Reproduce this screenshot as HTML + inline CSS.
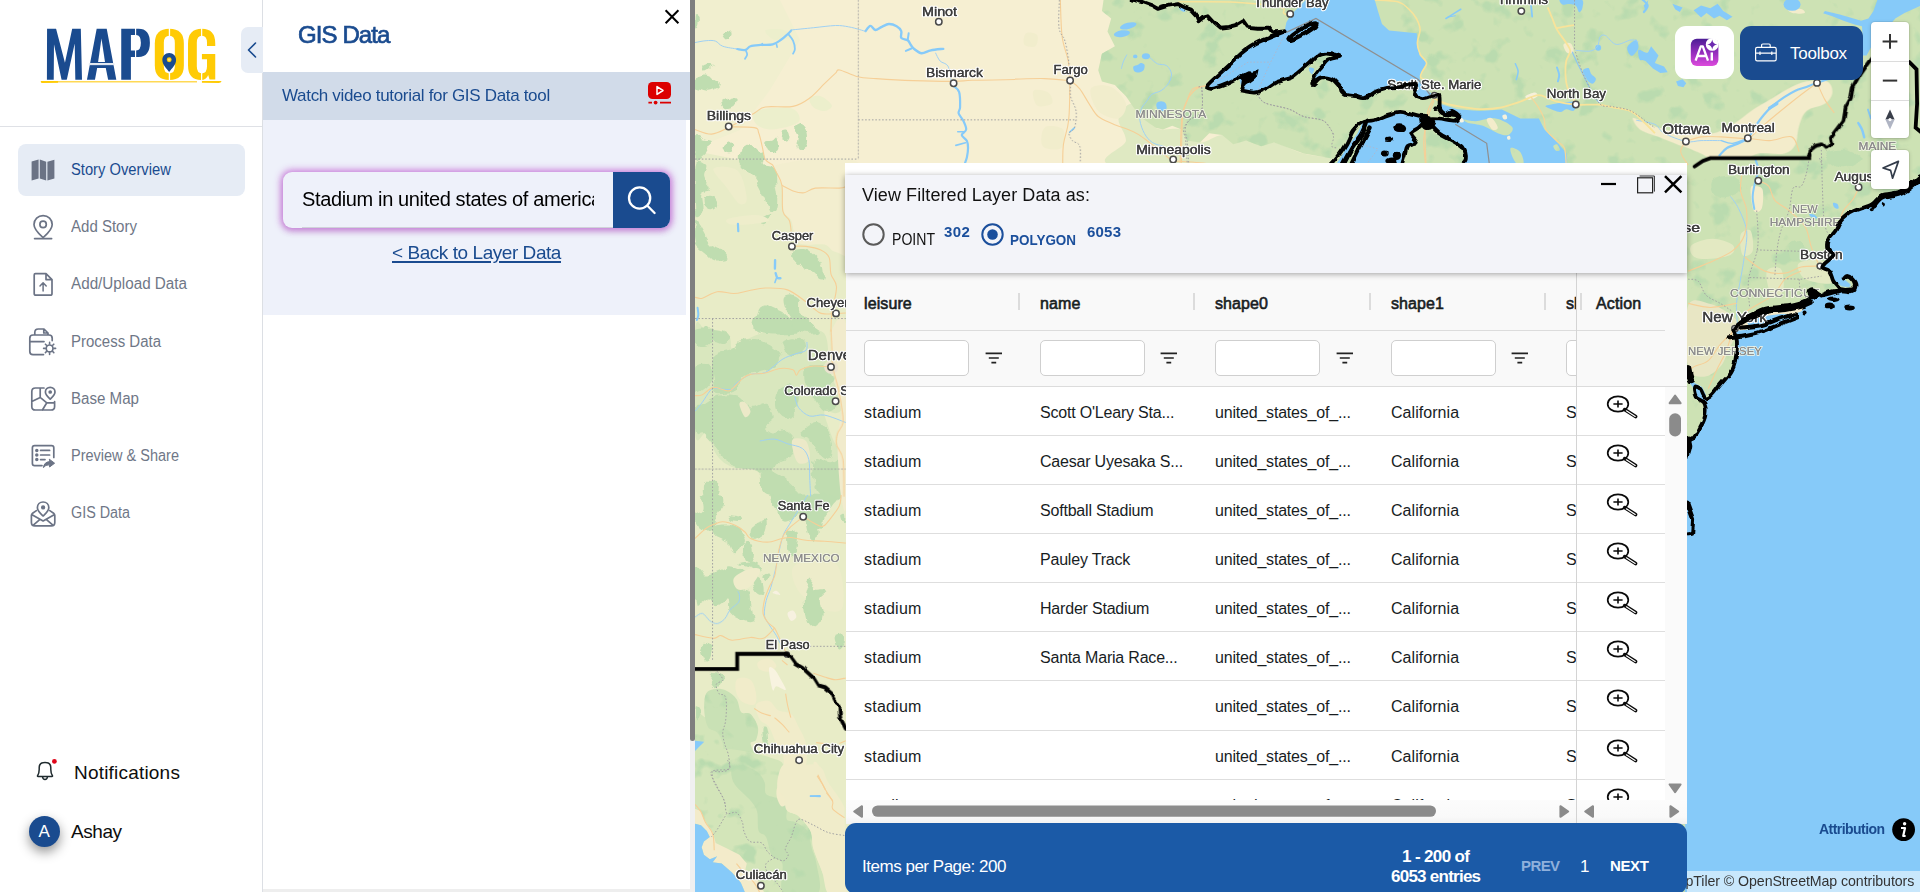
<!DOCTYPE html>
<html lang="en">
<head>
<meta charset="utf-8">
<title>MAPOG - GIS Data</title>
<style>
*{box-sizing:border-box;margin:0;padding:0}
html,body{width:1920px;height:892px;overflow:hidden;background:#fff;font-family:"Liberation Sans",sans-serif;color:#000}
.abs{position:absolute}
.t{position:absolute;white-space:nowrap;line-height:1}
/* sidebar */
#sidebar{position:absolute;left:0;top:0;width:263px;height:892px;background:#fff;border-right:1px solid #dcdfe4}
#sidebar .divider{position:absolute;left:0;top:126px;width:262px;height:1px;background:#dfe1e6}
.nav{position:absolute;left:18px;width:227px;height:52px;border-radius:8px}
.nav.active{background:#e6ecf5}
.nav .lbl{position:absolute;left:53px;top:17px;font-size:16px;line-height:18px;color:#6f7787;white-space:nowrap}
.nav.active .lbl{color:#1a4b8f}
.nav svg{position:absolute;left:10px;top:12px}
#collapse{position:absolute;left:241px;top:27px;width:22px;height:46px;background:#e6ecf5;border-radius:7px 0 0 7px}
/* gis panel */
#panel{position:absolute;left:263px;top:0;width:432px;height:892px;background:#fff}
#tut{position:absolute;left:0;top:72px;width:427px;height:48px;background:#d1dbe9}
#pbody{position:absolute;left:0;top:120px;width:423px;height:195px;background:#eef1fa}
#search{position:absolute;left:20px;top:172px;width:387px;height:56px;border-radius:9px;background:#eef1fa;box-shadow:0 0 7px 2px rgba(196,106,214,.85), 0 3px 6px rgba(120,60,140,.25)}
#search .btn{position:absolute;right:0;top:0;width:57px;height:56px;background:#1a4b8f;border-radius:0 9px 9px 0}
#search .ul{position:absolute;left:19px;top:54.5px;width:311px;height:1.5px;background:#cfd2d9}
#vsb{position:absolute;left:427px;top:0;width:5px;height:741px;background:#7f7f7f;border-radius:0 0 3px 3px}
#vtrack{position:absolute;left:427px;top:0;width:5px;height:892px;background:#f0f0f0}
/* map */
#map{position:absolute;left:695px;top:0;width:1225px;height:892px;overflow:hidden;background:#f6f0d2}
#map svg.base{position:absolute;left:-695px;top:0}
/* data panel */
#dp{position:absolute;left:845px;top:163px;width:842px;height:729px;background:transparent}
#dptop{position:absolute;left:0;top:0;width:842px;height:14px;background:#fff}
#dph{position:absolute;left:0;top:12px;width:842px;height:98px;background:#f3f4f9;box-shadow:0 1px 6px rgba(0,0,0,.36);z-index:3}
#dphi{position:absolute;left:0;top:-12px;width:842px;height:110px}
#grid{position:absolute;left:1px;top:110px;width:841px;height:551px;background:#fff;overflow:hidden}
#ghead{position:absolute;left:0;top:0;width:841px;height:113px;background:#f9f9f9}
.hl{position:absolute;left:0;height:1px;background:#dcdcdc}
.hc{position:absolute;top:22px;font-size:16px;font-weight:400;-webkit-text-stroke:.6px #181d1f;letter-spacing:.1px;color:#181d1f;white-space:nowrap;line-height:18px}
.sep{position:absolute;top:20px;width:2px;height:17px;background:#dcdcdc}
.fi{position:absolute;top:67px;width:105px;height:36px;border:1px solid #cfcfcf;border-radius:5px;background:#fff}
.fic{position:absolute;top:76.5px}
.row{position:absolute;left:0;width:730px;height:50px;border-bottom:1px solid #dedede;font-size:16px;color:#181d1f;letter-spacing:-.2px}
.row span{position:absolute;top:16px;line-height:20px;white-space:nowrap}
.c1{left:18px;letter-spacing:.22px}.c2{left:194px}.c3{left:369px}.c4{left:545px;letter-spacing:.05px}.c5{left:720px}
#pin{position:absolute;left:730px;top:0;width:111px;height:551px;border-left:1px solid #d4d4d4;background:transparent}
.mag{position:absolute;left:28.2px}
#foot{position:absolute;left:0;top:660px;width:842px;height:71px;background:#1b5aa7;border-radius:11px;color:#fff;z-index:4}
/* map controls */
.ctl{position:absolute;background:#fff;border-radius:4px;box-shadow:0 0 0 1px rgba(0,0,0,.06),0 1px 4px rgba(0,0,0,.18)}
.lab{font-family:"Liberation Sans",sans-serif;fill:#3d3d3d;stroke:#fff;stroke-width:2.6px;paint-order:stroke;stroke-linejoin:round;font-weight:400}
.lab2{font-family:"Liberation Sans",sans-serif;fill:#3e3e3e;stroke:#3e3e3e;stroke-width:.3px}
.st2{font-family:"Liberation Sans",sans-serif;fill:#8c8c8c;stroke:none}
.st{font-family:"Liberation Sans",sans-serif;fill:#8e8e8e;stroke:#f4f6e6;stroke-width:1.6px;paint-order:stroke}
</style>
</head>
<body>

<!-- ================= MAP ================= -->
<div id="map">
<svg class="base" width="1920" height="892" viewBox="0 0 1920 892">
<!--MAPSVG-->
<defs><filter id="forest" color-interpolation-filters="sRGB" filterUnits="userSpaceOnUse" x="690" y="0" width="1230" height="892"><feTurbulence type="fractalNoise" baseFrequency="0.045" numOctaves="3" seed="11" result="n"/><feColorMatrix in="n" type="matrix" values="0 0 0 0 0.73  0 0 0 0 0.86  0 0 0 0 0.685  7 0 0 0 -4.05" result="spots"/><feComposite in="spots" in2="SourceGraphic" operator="in" result="sp"/><feMerge><feMergeNode in="SourceGraphic"/><feMergeNode in="sp"/></feMerge></filter><filter id="jag" x="-5%" y="-5%" width="110%" height="110%"><feTurbulence type="fractalNoise" baseFrequency="0.09" numOctaves="2" seed="3" result="n"/><feDisplacementMap in="SourceGraphic" in2="n" scale="4.5" xChannelSelector="R" yChannelSelector="G"/></filter><filter id="rough" x="-5%" y="-5%" width="110%" height="110%"><feTurbulence type="fractalNoise" baseFrequency="0.07" numOctaves="3" seed="8" result="n"/><feDisplacementMap in="SourceGraphic" in2="n" scale="9" xChannelSelector="R" yChannelSelector="G"/></filter></defs>
<g id="L_tint" stroke="none">
<rect x="690" y="0" width="1230" height="892" fill="#f6efd2"/>
<path vector-effect="non-scaling-stroke" d="M690 150 L740 160 L790 175 L830 215 L850 260 L850 892 L690 892 Z" fill="#e8ecc7"/>
<path vector-effect="non-scaling-stroke" d="M690 0 L780 0 L800 40 L770 90 L740 130 L690 150 Z" fill="#f1efcf"/>
<g transform="translate(1015 0) scale(0.18498)"><path vector-effect="non-scaling-stroke" d="M640 560 C673.3 568.3 716.7 666.7 760 690 C803.3 713.3 860.0 686.7 900 700 C940.0 713.3 963.3 765.0 1000 770 C1036.7 775.0 1078.3 731.7 1120 730 C1161.7 728.3 1203.3 753.3 1250 760 C1296.7 766.7 1348.3 758.3 1400 770 C1451.7 781.7 1505.0 815.0 1560 830 C1615.0 845.0 1701.7 848.3 1730 860 C1758.3 871.7 1925.0 893.3 1730 900 C1535.0 906.7 748.3 923.3 560 900 C371.7 876.7 600.0 803.3 600 760 C600.0 716.7 553.3 673.3 560 640 C566.7 606.7 606.7 551.7 640 560 Z" fill="#dfe9c2"/></g>
<g transform="translate(695 0) scale(0.18498)"><path vector-effect="non-scaling-stroke" d="M380 165 C386.7 155.8 446.7 154.2 470 160 C493.3 165.8 526.7 190.8 520 200 C513.3 209.2 453.3 220.8 430 215 C406.7 209.2 373.3 174.2 380 165 Z" fill="#ecefcc"/></g>
<g transform="translate(695 0) scale(0.18498)"><path vector-effect="non-scaling-stroke" d="M330 600 C361.7 585.8 481.7 575.0 520 585 C558.3 595.0 576.7 640.8 560 660 C543.3 679.2 458.3 698.3 420 700 C381.7 701.7 345.0 686.7 330 670 C315.0 653.3 298.3 614.2 330 600 Z" fill="#ecefcc"/></g>
<g transform="translate(695 0) scale(0.18498)"><path vector-effect="non-scaling-stroke" d="M620 530 C626.7 520.0 660.0 513.3 680 520 C700.0 526.7 736.7 556.7 740 570 C743.3 583.3 716.7 598.3 700 600 C683.3 601.7 653.3 591.7 640 580 C626.7 568.3 613.3 540.0 620 530 Z" fill="#ecefcc"/></g>
<g transform="translate(1015 0) scale(0.18498)"><path vector-effect="non-scaling-stroke" d="M60 180 C71.7 171.7 111.7 178.3 120 190 C128.3 201.7 121.7 241.7 110 250 C98.3 258.3 58.3 251.7 50 240 C41.7 228.3 48.3 188.3 60 180 Z" fill="#f1edcc"/></g>
<g transform="translate(1015 0) scale(0.18498)"><path vector-effect="non-scaling-stroke" d="M100 490 C110.0 478.3 163.3 488.3 180 500 C196.7 511.7 210.0 548.3 200 560 C190.0 571.7 136.7 581.7 120 570 C103.3 558.3 90.0 501.7 100 490 Z" fill="#f1edcc"/></g>
<g transform="translate(1015 0) scale(0.18498)"><path vector-effect="non-scaling-stroke" d="M160 690 C178.3 675.0 245.0 681.7 260 700 C275.0 718.3 268.3 785.0 250 800 C231.7 815.0 165.0 808.3 150 790 C135.0 771.7 141.7 705.0 160 690 Z" fill="#f1edcc"/></g>
<g transform="translate(1015 0) scale(0.18498)"><path vector-effect="non-scaling-stroke" d="M410 480 C421.7 458.3 488.3 456.7 520 470 C551.7 483.3 593.3 531.7 600 560 C606.7 588.3 585.0 633.3 560 640 C535.0 646.7 475.0 626.7 450 600 C425.0 573.3 398.3 501.7 410 480 Z" fill="#f1edcc"/></g>
<g transform="translate(695 165) scale(0.18498)"><path vector-effect="non-scaling-stroke" d="M440 0 C511.7 -18.3 823.3 -78.3 900 0 C976.7 78.3 923.3 391.7 900 470 C876.7 548.3 793.3 476.7 760 470 C726.7 463.3 733.3 438.3 700 430 C666.7 421.7 590.0 441.7 560 420 C530.0 398.3 533.3 328.3 520 300 C506.7 271.7 488.3 281.7 480 250 C471.7 218.3 476.7 151.7 470 110 C463.3 68.3 368.3 18.3 440 0 Z" fill="#f3eecf"/></g>
<g transform="translate(695 330) scale(0.18498)"><path vector-effect="non-scaling-stroke" d="M0 0 C10.0 -93.3 30.0 -5.0 60 0 C90.0 5.0 156.7 13.3 180 30 C203.3 46.7 186.7 95.0 200 100 C213.3 105.0 223.3 76.7 260 60 C296.7 43.3 363.3 10.0 420 0 C476.7 -10.0 553.3 -3.3 600 0 C646.7 3.3 680.0 -5.0 700 20 C720.0 45.0 720.0 120.0 720 150 C720.0 180.0 693.3 175.0 700 200 C706.7 225.0 745.0 263.3 760 300 C775.0 336.7 790.0 395.0 790 420 C790.0 445.0 775.0 446.7 760 450 C745.0 453.3 706.7 428.3 700 440 C693.3 451.7 711.7 493.3 720 520 C728.3 546.7 736.7 570.0 750 600 C763.3 630.0 790.0 650.0 800 700 C810.0 750.0 850.0 866.7 810 900 C770.0 933.3 615.0 916.7 560 900 C505.0 883.3 510.0 813.3 480 800 C450.0 786.7 405.0 826.7 380 820 C355.0 813.3 360.0 773.3 330 760 C300.0 746.7 235.0 753.3 200 740 C165.0 726.7 143.3 710.0 120 680 C96.7 650.0 80.0 580.0 60 560 C40.0 540.0 10.0 653.3 0 560 C-10.0 466.7 -10.0 93.3 0 0 Z" fill="#d9e7be"/></g>
<g transform="translate(695 495) scale(0.18498)"><path vector-effect="non-scaling-stroke" d="M540 380 C573.3 355.0 716.7 333.3 760 370 C803.3 406.7 810.0 558.3 800 600 C790.0 641.7 740.0 633.3 700 620 C660.0 606.7 586.7 560.0 560 520 C533.3 480.0 506.7 405.0 540 380 Z" fill="#edecca"/></g>
<g transform="translate(695 760) scale(0.14802)"><path vector-effect="non-scaling-stroke" d="M700 100 C723.3 81.7 820.0 86.7 860 120 C900.0 153.3 933.3 256.7 940 300 C946.7 343.3 926.7 375.0 900 380 C873.3 385.0 810.0 355.0 780 330 C750.0 305.0 733.3 268.3 720 230 C706.7 191.7 676.7 118.3 700 100 Z" fill="#e7ecc6"/></g>
</g>
<g id="L_green" fill="#cde2b4" stroke="none" filter="url(#forest)">
<g transform="translate(1015 0) scale(0.18498)"><path vector-effect="non-scaling-stroke" d="M480 -10 L470 60 L520 100 L500 170 L540 250 L470 290 L450 380 L470 440 L540 460 L600 520 L640 580 L690 640 L760 690 L800 700 L850 680 L900 700 L930 760 L1000 770 L1050 720 L1120 730 L1180 780 L1250 760 L1330 790 L1400 770 L1480 800 L1560 830 L1730 860 L1730 900 L5000 900 L5000 -10 Z"/></g>
<g transform="translate(0 0) scale(1.00000)"><path vector-effect="non-scaling-stroke" d="M1680 150 L1930 150 L1930 900 L1680 900 Z"/></g>
<g transform="translate(1680 300) scale(0.20186)"><path vector-effect="non-scaling-stroke" d="M120 300 C133.3 276.7 180.0 260.0 200 260 C220.0 260.0 235.0 281.7 240 300 C245.0 318.3 240.0 350.0 230 370 C220.0 390.0 198.3 415.0 180 420 C161.7 425.0 130.0 420.0 120 400 C110.0 380.0 106.7 323.3 120 300 Z"/></g>
<g transform="translate(695 640) scale(0.18498)"><path vector-effect="non-scaling-stroke" d="M0 440 C10.0 360.0 35.0 410.0 60 420 C85.0 430.0 131.7 463.3 150 500 C168.3 536.7 161.7 596.7 170 640 C178.3 683.3 178.3 716.7 200 760 C221.7 803.3 333.3 876.7 300 900 C266.7 923.3 50.0 976.7 0 900 C-50.0 823.3 -10.0 520.0 0 440 Z" fill="#d3e5b9"/></g>
<g transform="translate(695 640) scale(0.18498)"><path vector-effect="non-scaling-stroke" d="M60 290 C70.0 270.8 91.7 267.5 110 265 C128.3 262.5 150.8 265.8 170 275 C189.2 284.2 211.7 300.8 225 320 C238.3 339.2 237.5 376.7 250 390 C262.5 403.3 285.0 386.7 300 400 C315.0 413.3 335.0 446.7 340 470 C345.0 493.3 336.7 525.0 330 540 C323.3 555.0 298.3 543.3 300 560 C301.7 576.7 323.3 616.7 340 640 C356.7 663.3 380.0 673.3 400 700 C420.0 726.7 448.3 766.7 460 800 C471.7 833.3 496.7 883.3 470 900 C443.3 916.7 345.0 925.0 300 900 C255.0 875.0 223.3 793.3 200 750 C176.7 706.7 168.3 671.7 160 640 C151.7 608.3 156.7 583.3 150 560 C143.3 536.7 133.3 515.0 120 500 C106.7 485.0 81.7 490.0 70 470 C58.3 450.0 51.7 410.0 50 380 C48.3 350.0 50.0 309.2 60 290 Z" fill="#c9e1b5"/></g>
<g transform="translate(695 760) scale(0.14802)"><path vector-effect="non-scaling-stroke" d="M0 0 C93.3 -150.0 466.7 -33.3 560 0 C653.3 33.3 553.3 158.3 560 200 C566.7 241.7 590.0 226.7 600 250 C610.0 273.3 603.3 318.3 620 340 C636.7 361.7 673.3 356.7 700 380 C726.7 403.3 763.3 443.3 780 480 C796.7 516.7 786.7 553.3 800 600 C813.3 646.7 843.3 710.0 860 760 C876.7 810.0 1043.3 876.7 900 900 C756.7 923.3 150.0 1050.0 0 900 C-150.0 750.0 -93.3 150.0 0 0 Z" fill="#d3e5b9"/></g>
<g transform="translate(695 760) scale(0.14802)"><path vector-effect="non-scaling-stroke" d="M250 60 C261.7 41.7 301.7 36.7 330 40 C358.3 43.3 396.7 61.7 420 80 C443.3 98.3 460.0 125.0 470 150 C480.0 175.0 465.0 211.7 480 230 C495.0 248.3 536.7 248.3 560 260 C583.3 271.7 610.0 276.7 620 300 C630.0 323.3 610.0 380.0 620 400 C630.0 420.0 656.7 406.7 680 420 C703.3 433.3 741.7 450.0 760 480 C778.3 510.0 780.0 563.3 790 600 C800.0 636.7 813.3 650.0 820 700 C826.7 750.0 866.7 866.7 830 900 C793.3 933.3 640.0 933.3 600 900 C560.0 866.7 603.3 741.7 590 700 C576.7 658.3 538.3 680.0 520 650 C501.7 620.0 495.0 548.3 480 520 C465.0 491.7 440.0 508.3 430 480 C420.0 451.7 428.3 383.3 420 350 C411.7 316.7 396.7 301.7 380 280 C363.3 258.3 340.0 241.7 320 220 C300.0 198.3 271.7 176.7 260 150 C248.3 123.3 238.3 78.3 250 60 Z" fill="#c3deb2"/></g>
</g>
<g id="L_dgreen" fill="#bfddb0" stroke="none" filter="url(#rough)">
<g transform="translate(695 0) scale(0.18498)"><path vector-effect="non-scaling-stroke" d="M0 85 C3.3 75.8 17.5 85.8 20 95 C22.5 104.2 18.3 130.8 15 140 C11.7 149.2 2.5 159.2 0 150 C-2.5 140.8 -3.3 94.2 0 85 Z"/></g>
<g transform="translate(695 0) scale(0.18498)"><path vector-effect="non-scaling-stroke" d="M150 175 C150.5 167.3 167.0 161.2 175 162 C183.0 162.8 198.5 172.3 198 180 C197.5 187.7 180.0 208.8 172 208 C164.0 207.2 149.5 182.7 150 175 Z"/></g>
<g transform="translate(695 0) scale(0.18498)"><path vector-effect="non-scaling-stroke" d="M40 360 C44.2 353.3 60.0 346.7 70 345 C80.0 343.3 97.5 345.0 100 350 C102.5 355.0 91.7 368.0 85 375 C78.3 382.0 66.7 390.3 60 392 C53.3 393.7 48.3 390.3 45 385 C41.7 379.7 35.8 366.7 40 360 Z"/></g>
<g transform="translate(695 0) scale(0.18498)"><path vector-effect="non-scaling-stroke" d="M0 440 C5.0 431.7 16.7 424.2 30 420 C43.3 415.8 64.2 411.7 80 415 C95.8 418.3 118.3 430.8 125 440 C131.7 449.2 129.2 461.7 120 470 C110.8 478.3 86.7 488.3 70 490 C53.3 491.7 31.7 483.3 20 480 C8.3 476.7 3.3 476.7 0 470 C-3.3 463.3 -5.0 448.3 0 440 Z"/></g>
<g transform="translate(695 0) scale(0.18498)"><path vector-effect="non-scaling-stroke" d="M150 560 C151.7 551.7 168.0 540.3 180 535 C192.0 529.7 216.2 522.2 222 528 C227.8 533.8 223.7 560.5 215 570 C206.3 579.5 180.8 586.7 170 585 C159.2 583.3 148.3 568.3 150 560 Z"/></g>
<g transform="translate(695 0) scale(0.18498)"><path vector-effect="non-scaling-stroke" d="M0 740 C6.7 723.3 25.8 755.0 40 760 C54.2 765.0 80.0 760.0 85 770 C90.0 780.0 79.2 805.0 70 820 C60.8 835.0 41.7 853.3 30 860 C18.3 866.7 5.0 880.0 0 860 C-5.0 840.0 -6.7 756.7 0 740 Z"/></g>
<g transform="translate(695 0) scale(0.18498)"><path vector-effect="non-scaling-stroke" d="M150 790 C152.5 779.5 175.0 765.0 185 765 C195.0 765.0 206.7 779.2 210 790 C213.3 800.8 211.7 823.7 205 830 C198.3 836.3 179.2 834.7 170 828 C160.8 821.3 147.5 800.5 150 790 Z"/></g>
<g transform="translate(695 0) scale(0.18498)"><path vector-effect="non-scaling-stroke" d="M240 830 C243.3 813.0 258.3 795.0 270 790 C281.7 785.0 295.0 793.3 310 800 C325.0 806.7 353.3 814.7 360 830 C366.7 845.3 368.3 881.7 350 892 C331.7 902.3 268.3 902.3 250 892 C231.7 881.7 236.7 847.0 240 830 Z"/></g>
<g transform="translate(695 0) scale(0.18498)"><path vector-effect="non-scaling-stroke" d="M380 770 C385.0 760.8 410.0 764.2 420 760 C430.0 755.8 435.0 738.3 440 745 C445.0 751.7 453.3 787.5 450 800 C446.7 812.5 430.0 817.5 420 820 C410.0 822.5 396.7 823.3 390 815 C383.3 806.7 375.0 779.2 380 770 Z"/></g>
<g transform="translate(695 0) scale(0.18498)"><path vector-effect="non-scaling-stroke" d="M460 715 C463.3 706.3 481.3 698.3 490 700 C498.7 701.7 510.3 715.3 512 725 C513.7 734.7 507.0 753.5 500 758 C493.0 762.5 476.7 759.2 470 752 C463.3 744.8 456.7 723.7 460 715 Z"/></g>
<g transform="translate(695 0) scale(0.18498)"><path vector-effect="non-scaling-stroke" d="M535 690 C536.7 677.5 559.2 663.3 570 665 C580.8 666.7 594.2 682.5 600 700 C605.8 717.5 608.3 752.5 605 770 C601.7 787.5 588.3 800.8 580 805 C571.7 809.2 558.3 805.8 555 795 C551.7 784.2 563.3 757.5 560 740 C556.7 722.5 533.3 702.5 535 690 Z"/></g>
<g transform="translate(1680 150) scale(0.20186)"><path vector-effect="non-scaling-stroke" d="M160 150 C176.7 136.7 236.7 121.7 260 130 C283.3 138.3 306.7 181.7 300 200 C293.3 218.3 243.3 238.3 220 240 C196.7 241.7 170.0 225.0 160 210 C150.0 195.0 143.3 163.3 160 150 Z"/></g>
<g transform="translate(1680 150) scale(0.20186)"><path vector-effect="non-scaling-stroke" d="M540 470 C546.7 455.0 585.0 441.7 600 450 C615.0 458.3 636.7 505.0 630 520 C623.3 535.0 575.0 548.3 560 540 C545.0 531.7 533.3 485.0 540 470 Z"/></g>
<g transform="translate(1680 150) scale(0.20186)"><path vector-effect="non-scaling-stroke" d="M720 20 C723.3 5.0 790.0 -5.0 820 0 C850.0 5.0 903.3 35.0 900 50 C896.7 65.0 830.0 95.0 800 90 C770.0 85.0 716.7 35.0 720 20 Z"/></g>
<g transform="translate(695 165) scale(0.18498)"><path vector-effect="non-scaling-stroke" d="M0 0 C10.0 -45.0 51.7 -10.0 60 0 C68.3 10.0 45.8 40.0 50 60 C54.2 80.0 86.7 105.0 85 120 C83.3 135.0 46.7 128.3 40 150 C33.3 171.7 51.7 230.0 45 250 C38.3 270.0 7.5 311.7 0 270 C-7.5 228.3 -10.0 45.0 0 0 Z"/></g>
<g transform="translate(695 165) scale(0.18498)"><path vector-effect="non-scaling-stroke" d="M55 175 C61.7 165.8 88.3 163.3 100 170 C111.7 176.7 125.8 202.5 125 215 C124.2 227.5 105.8 243.3 95 245 C84.2 246.7 66.7 236.7 60 225 C53.3 213.3 48.3 184.2 55 175 Z"/></g>
<g transform="translate(695 165) scale(0.18498)"><path vector-effect="non-scaling-stroke" d="M250 0 C270.0 -8.3 388.3 -16.7 420 0 C451.7 16.7 435.0 70.0 440 100 C445.0 130.0 450.0 156.7 450 180 C450.0 203.3 448.3 229.2 440 240 C431.7 250.8 410.0 253.3 400 245 C390.0 236.7 390.0 212.5 380 190 C370.0 167.5 353.3 133.3 340 110 C326.7 86.7 315.0 68.3 300 50 C285.0 31.7 230.0 8.3 250 0 Z"/></g>
<g transform="translate(695 165) scale(0.18498)"><path vector-effect="non-scaling-stroke" d="M335 300 C336.7 290.0 377.2 269.7 390 265 C402.8 260.3 413.7 262.0 412 272 C410.3 282.0 392.8 320.3 380 325 C367.2 329.7 333.3 310.0 335 300 Z"/></g>
<g transform="translate(695 165) scale(0.18498)"><path vector-effect="non-scaling-stroke" d="M0 310 C3.3 293.3 6.7 301.7 20 320 C33.3 338.3 61.7 398.3 80 420 C98.3 441.7 114.2 435.0 130 450 C145.8 465.0 180.0 499.2 175 510 C170.0 520.8 119.2 520.0 100 515 C80.8 510.0 76.7 495.8 60 480 C43.3 464.2 10.0 448.3 0 420 C-10.0 391.7 -3.3 326.7 0 310 Z"/></g>
<g transform="translate(695 165) scale(0.18498)"><path vector-effect="non-scaling-stroke" d="M520 470 C529.2 460.0 576.7 450.0 600 455 C623.3 460.0 645.0 485.8 660 500 C675.0 514.2 684.2 521.7 690 540 C695.8 558.3 698.3 597.5 695 610 C691.7 622.5 679.2 620.0 670 615 C660.8 610.0 651.7 589.2 640 580 C628.3 570.8 615.8 570.8 600 560 C584.2 549.2 558.3 530.0 545 515 C531.7 500.0 510.8 480.0 520 470 Z"/></g>
<g transform="translate(695 165) scale(0.18498)"><path vector-effect="non-scaling-stroke" d="M340 800 C346.7 776.7 365.0 763.3 380 760 C395.0 756.7 406.7 768.3 430 780 C453.3 791.7 495.0 810.0 520 830 C545.0 850.0 610.0 888.3 580 900 C550.0 911.7 380.0 916.7 340 900 C300.0 883.3 333.3 823.3 340 800 Z"/></g>
<g transform="translate(695 165) scale(0.18498)"><path vector-effect="non-scaling-stroke" d="M480 720 C485.0 707.5 505.8 703.3 520 705 C534.2 706.7 556.7 714.2 565 730 C573.3 745.8 562.5 780.0 570 800 C577.5 820.0 593.3 833.3 610 850 C626.7 866.7 678.3 891.7 670 900 C661.7 908.3 585.0 911.7 560 900 C535.0 888.3 531.7 850.0 520 830 C508.3 810.0 496.7 798.3 490 780 C483.3 761.7 475.0 732.5 480 720 Z"/></g>
<g transform="translate(695 330) scale(0.18498)"><path vector-effect="non-scaling-stroke" d="M0 0 C23.3 -13.3 108.3 -6.7 140 0 C171.7 6.7 188.3 28.3 190 40 C191.7 51.7 165.0 66.7 150 70 C135.0 73.3 115.0 56.7 100 60 C85.0 63.3 76.7 86.7 60 90 C43.3 93.3 10.0 95.0 0 80 C-10.0 65.0 -23.3 13.3 0 0 Z" fill="#c0ddb0"/></g>
<g transform="translate(695 330) scale(0.18498)"><path vector-effect="non-scaling-stroke" d="M0 200 C10.0 175.0 44.2 175.0 60 180 C75.8 185.0 91.7 210.0 95 230 C98.3 250.0 90.8 281.7 80 300 C69.2 318.3 43.3 335.0 30 340 C16.7 345.0 5.0 353.3 0 330 C-5.0 306.7 -10.0 225.0 0 200 Z" fill="#c0ddb0"/></g>
<g transform="translate(695 330) scale(0.18498)"><path vector-effect="non-scaling-stroke" d="M100 150 C116.7 118.3 176.7 125.0 200 110 C223.3 95.0 218.3 70.0 240 60 C261.7 50.0 300.0 45.0 330 50 C360.0 55.0 396.7 73.3 420 90 C443.3 106.7 468.3 131.7 470 150 C471.7 168.3 451.7 186.7 430 200 C408.3 213.3 365.0 223.3 340 230 C315.0 236.7 298.3 230.0 280 240 C261.7 250.0 243.3 275.0 230 290 C216.7 305.0 216.7 321.7 200 330 C183.3 338.3 146.7 345.0 130 340 C113.3 335.0 105.0 331.7 100 300 C95.0 268.3 83.3 181.7 100 150 Z" fill="#c0ddb0"/></g>
<g transform="translate(695 330) scale(0.18498)"><path vector-effect="non-scaling-stroke" d="M480 60 C491.7 48.3 520.0 38.3 540 40 C560.0 41.7 591.7 56.7 600 70 C608.3 83.3 603.3 108.3 590 120 C576.7 131.7 540.0 141.7 520 140 C500.0 138.3 476.7 123.3 470 110 C463.3 96.7 468.3 71.7 480 60 Z" fill="#c0ddb0"/></g>
<g transform="translate(695 330) scale(0.18498)"><path vector-effect="non-scaling-stroke" d="M600 210 C616.7 193.3 675.0 191.7 700 200 C725.0 208.3 745.0 238.3 750 260 C755.0 281.7 728.3 303.3 730 330 C731.7 356.7 765.0 401.7 760 420 C755.0 438.3 718.3 446.7 700 440 C681.7 433.3 666.7 403.3 650 380 C633.3 356.7 608.3 328.3 600 300 C591.7 271.7 583.3 226.7 600 210 Z" fill="#c0ddb0"/></g>
<g transform="translate(695 330) scale(0.18498)"><path vector-effect="non-scaling-stroke" d="M450 330 C463.3 310.0 501.7 295.0 520 300 C538.3 305.0 556.7 336.7 560 360 C563.3 383.3 553.3 421.7 540 440 C526.7 458.3 496.7 473.3 480 470 C463.3 466.7 445.0 443.3 440 420 C435.0 396.7 436.7 350.0 450 330 Z" fill="#c0ddb0"/></g>
<g transform="translate(695 330) scale(0.18498)"><path vector-effect="non-scaling-stroke" d="M40 400 C61.7 388.3 98.3 356.7 130 350 C161.7 343.3 201.7 348.3 230 360 C258.3 371.7 275.0 413.3 300 420 C325.0 426.7 360.0 391.7 380 400 C400.0 408.3 420.0 450.0 420 470 C420.0 490.0 378.3 505.0 380 520 C381.7 535.0 410.0 556.7 430 560 C450.0 563.3 481.7 533.3 500 540 C518.3 546.7 536.7 576.7 540 600 C543.3 623.3 536.7 660.0 520 680 C503.3 700.0 460.0 700.0 440 720 C420.0 740.0 418.3 793.3 400 800 C381.7 806.7 355.0 770.0 330 760 C305.0 750.0 278.3 750.0 250 740 C221.7 730.0 185.0 720.0 160 700 C135.0 680.0 120.0 643.3 100 620 C80.0 596.7 56.7 570.0 40 560 C23.3 550.0 6.7 583.3 0 560 C-6.7 536.7 -6.7 446.7 0 420 C6.7 393.3 18.3 411.7 40 400 Z" fill="#c0ddb0"/></g>
<g transform="translate(695 330) scale(0.18498)"><path vector-effect="non-scaling-stroke" d="M560 560 C563.3 543.3 616.7 506.7 640 500 C663.3 493.3 683.3 500.0 700 520 C716.7 540.0 736.7 590.0 740 620 C743.3 650.0 733.3 693.3 720 700 C706.7 706.7 676.7 676.7 660 660 C643.3 643.3 636.7 616.7 620 600 C603.3 583.3 556.7 576.7 560 560 Z" fill="#c0ddb0"/></g>
<g transform="translate(695 330) scale(0.18498)"><path vector-effect="non-scaling-stroke" d="M640 700 C653.3 686.7 693.3 720.0 720 720 C746.7 720.0 785.0 671.3 800 700 C815.0 728.7 830.0 860.0 810 892 C790.0 924.0 708.3 907.3 680 892 C651.7 876.7 646.7 832.0 640 800 C633.3 768.0 626.7 713.3 640 700 Z" fill="#c0ddb0"/></g>
<g transform="translate(695 330) scale(0.18498)"><path vector-effect="non-scaling-stroke" d="M360 760 C376.7 744.7 446.7 778.0 480 800 C513.3 822.0 576.7 876.7 560 892 C543.3 907.3 413.3 914.0 380 892 C346.7 870.0 343.3 775.3 360 760 Z" fill="#c0ddb0"/></g>
<g transform="translate(695 330) scale(0.18498)"><path vector-effect="non-scaling-stroke" d="M60 820 C70.0 809.7 111.7 818.0 120 830 C128.3 842.0 120.0 881.7 110 892 C100.0 902.3 68.3 904.0 60 892 C51.7 880.0 50.0 830.3 60 820 Z" fill="#c0ddb0"/></g>
<g transform="translate(695 495) scale(0.18498)"><path vector-effect="non-scaling-stroke" d="M40 0 C56.7 -13.3 121.7 -10.0 140 0 C158.3 10.0 153.3 41.7 150 60 C146.7 78.3 128.3 90.0 120 110 C111.7 130.0 113.3 166.7 100 180 C86.7 193.3 56.7 195.0 40 190 C23.3 185.0 6.7 163.3 0 150 C-6.7 136.7 -6.7 121.7 0 110 C6.7 98.3 33.3 98.3 40 80 C46.7 61.7 23.3 13.3 40 0 Z"/></g>
<g transform="translate(695 495) scale(0.18498)"><path vector-effect="non-scaling-stroke" d="M185 110 C193.3 107.5 238.3 115.0 250 120 C261.7 125.0 263.3 137.5 255 140 C246.7 142.5 211.7 140.0 200 135 C188.3 130.0 176.7 112.5 185 110 Z"/></g>
<g transform="translate(695 495) scale(0.18498)"><path vector-effect="non-scaling-stroke" d="M100 170 C112.5 160.8 155.0 156.7 180 160 C205.0 163.3 234.2 175.0 250 190 C265.8 205.0 276.7 233.3 275 250 C273.3 266.7 250.0 278.3 240 290 C230.0 301.7 223.3 323.3 215 320 C206.7 316.7 200.8 283.3 190 270 C179.2 256.7 164.2 249.2 150 240 C135.8 230.8 113.3 226.7 105 215 C96.7 203.3 87.5 179.2 100 170 Z"/></g>
<g transform="translate(695 495) scale(0.18498)"><path vector-effect="non-scaling-stroke" d="M300 170 C308.3 156.7 335.8 150.8 350 145 C364.2 139.2 380.0 125.8 385 135 C390.0 144.2 389.2 183.3 380 200 C370.8 216.7 343.3 230.8 330 235 C316.7 239.2 305.0 235.8 300 225 C295.0 214.2 291.7 183.3 300 170 Z"/></g>
<g transform="translate(695 495) scale(0.18498)"><path vector-effect="non-scaling-stroke" d="M265 290 C270.0 273.3 291.2 248.3 300 250 C308.8 251.7 316.3 283.3 318 300 C319.7 316.7 318.0 341.7 310 350 C302.0 358.3 277.5 360.0 270 350 C262.5 340.0 260.0 306.7 265 290 Z"/></g>
<g transform="translate(695 495) scale(0.18498)"><path vector-effect="non-scaling-stroke" d="M430 0 C481.7 -13.3 698.3 -10.0 750 0 C801.7 10.0 748.3 40.0 740 60 C731.7 80.0 708.3 102.5 700 120 C691.7 137.5 698.3 156.7 690 165 C681.7 173.3 665.0 175.8 650 170 C635.0 164.2 615.0 141.7 600 130 C585.0 118.3 573.3 100.0 560 100 C546.7 100.0 535.0 124.2 520 130 C505.0 135.8 483.3 143.3 470 135 C456.7 126.7 446.7 102.5 440 80 C433.3 57.5 378.3 13.3 430 0 Z"/></g>
<g transform="translate(695 495) scale(0.18498)"><path vector-effect="non-scaling-stroke" d="M500 190 C507.5 173.3 540.8 190.0 550 200 C559.2 210.0 558.3 228.3 555 250 C551.7 271.7 538.3 321.7 530 330 C521.7 338.3 510.0 323.3 505 300 C500.0 276.7 492.5 206.7 500 190 Z"/></g>
<g transform="translate(695 495) scale(0.18498)"><path vector-effect="non-scaling-stroke" d="M605 140 C611.7 130.0 652.5 151.7 660 170 C667.5 188.3 656.7 240.0 650 250 C643.3 260.0 627.5 248.3 620 230 C612.5 211.7 598.3 150.0 605 140 Z"/></g>
<g transform="translate(695 495) scale(0.18498)"><path vector-effect="non-scaling-stroke" d="M0 390 C10.0 363.3 35.0 428.3 60 430 C85.0 431.7 128.3 408.3 150 400 C171.7 391.7 176.7 381.7 190 380 C203.3 378.3 213.3 383.3 230 390 C246.7 396.7 288.3 411.7 290 420 C291.7 428.3 246.7 426.7 240 440 C233.3 453.3 240.0 486.7 250 500 C260.0 513.3 290.0 503.3 300 520 C310.0 536.7 306.7 573.3 310 600 C313.3 626.7 328.3 666.7 320 680 C311.7 693.3 281.7 686.7 260 680 C238.3 673.3 203.3 660.0 190 640 C176.7 620.0 191.7 566.7 180 560 C168.3 553.3 136.7 600.0 120 600 C103.3 600.0 96.7 560.0 80 560 C63.3 560.0 33.3 595.0 20 600 C6.7 605.0 3.3 625.0 0 590 C-3.3 555.0 -10.0 416.7 0 390 Z"/></g>
<g transform="translate(695 495) scale(0.18498)"><path vector-effect="non-scaling-stroke" d="M235 370 C235.0 364.2 280.0 356.7 300 360 C320.0 363.3 346.7 380.0 355 390 C363.3 400.0 359.2 419.2 350 420 C340.8 420.8 319.2 403.3 300 395 C280.8 386.7 235.0 375.8 235 370 Z"/></g>
<g transform="translate(695 495) scale(0.18498)"><path vector-effect="non-scaling-stroke" d="M310 460 C313.3 447.5 340.0 440.0 350 445 C360.0 450.0 367.5 474.2 370 490 C372.5 505.8 371.7 535.0 365 540 C358.3 545.0 339.2 533.3 330 520 C320.8 506.7 306.7 472.5 310 460 Z"/></g>
<g transform="translate(695 495) scale(0.18498)"><path vector-effect="non-scaling-stroke" d="M375 440 C375.0 431.7 388.3 415.0 395 415 C401.7 415.0 415.0 431.7 415 440 C415.0 448.3 401.7 465.0 395 465 C388.3 465.0 375.0 448.3 375 440 Z"/></g>
<g transform="translate(695 495) scale(0.18498)"><path vector-effect="non-scaling-stroke" d="M590 540 C594.2 509.2 611.7 466.7 620 455 C628.3 443.3 637.5 460.8 640 470 C642.5 479.2 625.0 503.3 635 510 C645.0 516.7 688.3 506.7 700 510 C711.7 513.3 708.3 521.7 705 530 C701.7 538.3 682.5 541.7 680 560 C677.5 578.3 692.5 615.0 690 640 C687.5 665.0 676.7 700.0 665 710 C653.3 720.0 631.7 711.7 620 700 C608.3 688.3 600.0 666.7 595 640 C590.0 613.3 585.8 570.8 590 540 Z"/></g>
<g transform="translate(695 495) scale(0.18498)"><path vector-effect="non-scaling-stroke" d="M750 780 C754.2 767.5 790.0 758.3 800 760 C810.0 761.7 814.2 777.5 810 790 C805.8 802.5 785.0 836.7 775 835 C765.0 833.3 745.8 792.5 750 780 Z"/></g>
<g transform="translate(695 495) scale(0.18498)"><path vector-effect="non-scaling-stroke" d="M30 830 C33.3 818.3 45.8 800.0 55 800 C64.2 800.0 84.2 814.7 85 830 C85.8 845.3 68.3 885.3 60 892 C51.7 898.7 40.0 880.3 35 870 C30.0 859.7 26.7 841.7 30 830 Z"/></g>
<g transform="translate(695 495) scale(0.18498)"><path vector-effect="non-scaling-stroke" d="M780 110 C783.3 102.5 805.0 96.7 810 105 C815.0 113.3 813.3 152.5 810 160 C806.7 167.5 795.0 158.3 790 150 C785.0 141.7 776.7 117.5 780 110 Z"/></g>
<g transform="translate(695 640) scale(0.18498)"><path vector-effect="non-scaling-stroke" d="M30 40 C33.3 27.5 45.8 13.3 55 15 C64.2 16.7 84.2 33.3 85 50 C85.8 66.7 68.3 108.3 60 115 C51.7 121.7 40.0 102.5 35 90 C30.0 77.5 26.7 52.5 30 40 Z"/></g>
<g transform="translate(695 640) scale(0.18498)"><path vector-effect="non-scaling-stroke" d="M85 200 C88.3 189.2 100.0 175.0 110 175 C120.0 175.0 143.3 185.8 145 200 C146.7 214.2 129.2 253.3 120 260 C110.8 266.7 95.8 250.0 90 240 C84.2 230.0 81.7 210.8 85 200 Z"/></g>
<g transform="translate(695 640) scale(0.18498)"><path vector-effect="non-scaling-stroke" d="M0 350 C5.0 340.0 26.7 366.7 30 380 C33.3 393.3 25.0 420.0 20 430 C15.0 440.0 3.3 453.3 0 440 C-3.3 426.7 -5.0 360.0 0 350 Z"/></g>
<g transform="translate(695 640) scale(0.18498)"><path vector-effect="non-scaling-stroke" d="M420 450 C429.2 448.3 455.0 468.3 470 480 C485.0 491.7 505.0 506.7 510 520 C515.0 533.3 510.0 556.7 500 560 C490.0 563.3 464.2 551.7 450 540 C435.8 528.3 420.0 505.0 415 490 C410.0 475.0 410.8 451.7 420 450 Z"/></g>
<g transform="translate(695 640) scale(0.18498)"><path vector-effect="non-scaling-stroke" d="M370 470 C371.7 454.2 385.0 453.3 390 465 C395.0 476.7 401.7 524.2 400 540 C398.3 555.8 385.0 571.7 380 560 C375.0 548.3 368.3 485.8 370 470 Z"/></g>
</g>
<g id="L_sand" fill="#f3eccb" stroke="none">
<g transform="translate(1335 0) scale(0.18498)"><path vector-effect="non-scaling-stroke" d="M1235 240 C1238.3 231.7 1265.8 228.3 1275 235 C1284.2 241.7 1293.3 271.7 1290 280 C1286.7 288.3 1264.2 291.7 1255 285 C1245.8 278.3 1231.7 248.3 1235 240 Z"/></g>
<g transform="translate(1335 0) scale(0.18498)"><path vector-effect="non-scaling-stroke" d="M1030 520 C1035.0 513.3 1069.2 500.0 1080 500 C1090.8 500.0 1100.0 513.3 1095 520 C1090.0 526.7 1060.8 540.0 1050 540 C1039.2 540.0 1025.0 526.7 1030 520 Z" fill="#f6f0da"/></g>
<g transform="translate(1640 0) scale(0.18498)"><path vector-effect="non-scaling-stroke" d="M1010 440 C1033.3 450.0 1041.7 480.0 1040 500 C1038.3 520.0 1023.3 543.3 1000 560 C976.7 576.7 923.3 580.0 900 600 C876.7 620.0 870.0 650.0 860 680 C850.0 710.0 853.3 755.0 840 780 C826.7 805.0 813.3 821.7 780 830 C746.7 838.3 676.7 825.0 640 830 C603.3 835.0 600.0 855.0 560 860 C520.0 865.0 438.3 865.0 400 860 C361.7 855.0 353.3 840.0 330 830 C306.7 820.0 281.7 808.3 260 800 C238.3 791.7 226.7 790.0 200 780 C173.3 770.0 133.3 753.3 100 740 C66.7 726.7 23.3 716.7 0 700 C-23.3 683.3 -40.0 648.3 -40 640 C-40.0 631.7 -23.3 641.7 0 650 C23.3 658.3 58.3 678.3 100 690 C141.7 701.7 200.0 715.0 250 720 C300.0 725.0 355.0 730.0 400 720 C445.0 710.0 486.7 680.0 520 660 C553.3 640.0 570.0 620.0 600 600 C630.0 580.0 666.7 560.0 700 540 C733.3 520.0 766.7 496.7 800 480 C833.3 463.3 865.0 446.7 900 440 C935.0 433.3 986.7 430.0 1010 440 Z"/></g>
<g transform="translate(1640 0) scale(0.18498)"><path vector-effect="non-scaling-stroke" d="M800 52 C806.7 48.0 855.0 45.0 870 48 C885.0 51.0 896.7 66.0 890 70 C883.3 74.0 845.0 75.0 830 72 C815.0 69.0 793.3 56.0 800 52 Z"/></g>
<g transform="translate(1680 150) scale(0.20186)"><path vector-effect="non-scaling-stroke" d="M350 190 C352.5 170.0 370.0 178.3 380 180 C390.0 181.7 405.8 181.7 410 200 C414.2 218.3 412.5 273.3 405 290 C397.5 306.7 374.2 316.7 365 300 C355.8 283.3 347.5 210.0 350 190 Z"/></g>
<g transform="translate(1680 150) scale(0.20186)"><path vector-effect="non-scaling-stroke" d="M590 560 C606.7 547.5 671.7 538.3 700 545 C728.3 551.7 751.7 580.8 760 600 C768.3 619.2 768.3 651.7 750 660 C731.7 668.3 675.0 656.7 650 650 C625.0 643.3 610.0 635.0 600 620 C590.0 605.0 573.3 572.5 590 560 Z" fill="#e3e9c2"/></g>
<g transform="translate(1680 150) scale(0.20186)"><path vector-effect="non-scaling-stroke" d="M430 600 C438.3 580.0 486.7 573.3 500 590 C513.3 606.7 518.3 680.0 510 700 C501.7 720.0 463.3 726.7 450 710 C436.7 693.3 421.7 620.0 430 600 Z" fill="#e3e9c2"/></g>
<g transform="translate(1680 150) scale(0.20186)"><path vector-effect="non-scaling-stroke" d="M300 420 C306.7 400.0 340.0 386.7 350 400 C360.0 413.3 366.7 480.0 360 500 C353.3 520.0 320.0 533.3 310 520 C300.0 506.7 293.3 440.0 300 420 Z" fill="#e3e9c2"/></g>
<g transform="translate(1680 150) scale(0.20186)"><path vector-effect="non-scaling-stroke" d="M60 470 C76.7 456.7 126.7 440.0 160 440 C193.3 440.0 245.0 456.7 260 470 C275.0 483.3 273.3 508.3 250 520 C226.7 531.7 151.7 540.0 120 540 C88.3 540.0 70.0 531.7 60 520 C50.0 508.3 43.3 483.3 60 470 Z" fill="#e3e9c2"/></g>
<g transform="translate(1680 300) scale(0.20186)"><path vector-effect="non-scaling-stroke" d="M40 30 C58.3 -21.7 113.3 11.7 150 20 C186.7 28.3 236.7 60.0 260 80 C283.3 100.0 293.3 111.7 290 140 C286.7 168.3 255.0 218.3 240 250 C225.0 281.7 220.0 308.3 200 330 C180.0 351.7 146.7 380.0 120 380 C93.3 380.0 53.3 388.3 40 330 C26.7 271.7 21.7 81.7 40 30 Z" fill="#e8e6c4"/></g>
<g transform="translate(695 165) scale(0.18498)"><path vector-effect="non-scaling-stroke" d="M100 20 C110.0 5.0 200.0 3.3 230 30 C260.0 56.7 278.3 150.0 280 180 C281.7 210.0 258.3 220.0 240 210 C221.7 200.0 193.3 151.7 170 120 C146.7 88.3 90.0 35.0 100 20 Z" fill="#eeedcb"/></g>
<g transform="translate(695 165) scale(0.18498)"><path vector-effect="non-scaling-stroke" d="M180 290 C203.3 281.7 293.3 268.3 330 270 C366.7 271.7 405.0 291.7 400 300 C395.0 308.3 335.0 316.7 300 320 C265.0 323.3 210.0 325.0 190 320 C170.0 315.0 156.7 298.3 180 290 Z" fill="#eeedcb"/></g>
<g transform="translate(695 330) scale(0.18498)"><path vector-effect="non-scaling-stroke" d="M530 590 C541.7 581.7 585.0 581.7 600 600 C615.0 618.3 626.7 680.0 620 700 C613.3 720.0 575.0 728.3 560 720 C545.0 711.7 535.0 671.7 530 650 C525.0 628.3 518.3 598.3 530 590 Z" fill="#ece9c8"/></g>
<g transform="translate(695 330) scale(0.18498)"><path vector-effect="non-scaling-stroke" d="M240 400 C240.0 386.7 260.0 383.3 270 390 C280.0 396.7 300.0 426.7 300 440 C300.0 453.3 280.0 476.7 270 470 C260.0 463.3 240.0 413.3 240 400 Z" fill="#ece9c8"/></g>
<g transform="translate(695 330) scale(0.18498)"><path vector-effect="non-scaling-stroke" d="M740 0 C752.5 -25.0 806.7 -150.0 820 0 C833.3 150.0 825.0 750.0 820 900 C815.0 1050.0 798.3 950.0 790 900 C781.7 850.0 770.0 675.0 770 600 C770.0 525.0 791.7 500.0 790 450 C788.3 400.0 767.5 350.0 760 300 C752.5 250.0 748.3 200.0 745 150 C741.7 100.0 727.5 25.0 740 0 Z" fill="#f1ebcc"/></g>
<g transform="translate(695 330) scale(0.18498)"><ellipse cx="737" cy="203" rx="38" ry="34" transform="rotate(0 737 203)" fill="#ebe3cf"/></g>
<g transform="translate(695 495) scale(0.18498)"><path vector-effect="non-scaling-stroke" d="M210 450 C220.0 431.7 266.7 408.3 290 400 C313.3 391.7 341.7 393.3 350 400 C358.3 406.7 350.0 423.3 340 440 C330.0 456.7 308.3 488.3 290 500 C271.7 511.7 243.3 518.3 230 510 C216.7 501.7 200.0 468.3 210 450 Z" fill="#efeccb"/></g>
<g transform="translate(695 495) scale(0.18498)"><path vector-effect="non-scaling-stroke" d="M500 640 C501.7 630.8 522.0 621.7 530 625 C538.0 628.3 549.7 650.8 548 660 C546.3 669.2 528.0 683.3 520 680 C512.0 676.7 498.3 649.2 500 640 Z" fill="#f7f1e0"/></g>
<g transform="translate(695 495) scale(0.18498)"><path vector-effect="non-scaling-stroke" d="M420 530 C416.7 526.3 433.3 516.3 440 518 C446.7 519.7 463.3 538.0 460 540 C456.7 542.0 423.3 533.7 420 530 Z" fill="#f7f1e0"/></g>
<g transform="translate(695 640) scale(0.18498)"><path vector-effect="non-scaling-stroke" d="M230 210 C243.3 200.8 283.3 201.7 300 215 C316.7 228.3 326.7 267.5 330 290 C333.3 312.5 333.3 343.3 320 350 C306.7 356.7 266.7 343.3 250 330 C233.3 316.7 223.3 290.0 220 270 C216.7 250.0 216.7 219.2 230 210 Z" fill="#f1ecca"/></g>
<g transform="translate(695 640) scale(0.18498)"><path vector-effect="non-scaling-stroke" d="M340 120 C348.3 110.0 383.3 96.7 400 100 C416.7 103.3 440.0 128.3 440 140 C440.0 151.7 415.0 166.7 400 170 C385.0 173.3 360.0 168.3 350 160 C340.0 151.7 331.7 130.0 340 120 Z" fill="#f1ecca"/></g>
<g transform="translate(695 640) scale(0.18498)"><path vector-effect="non-scaling-stroke" d="M330 350 C338.3 333.3 380.0 325.0 400 330 C420.0 335.0 430.0 368.3 450 380 C470.0 391.7 501.7 385.0 520 400 C538.3 415.0 546.7 443.3 560 470 C573.3 496.7 593.3 525.0 600 560 C606.7 595.0 606.7 646.7 600 680 C593.3 713.3 573.3 731.7 560 760 C546.7 788.3 535.0 826.7 520 850 C505.0 873.3 483.3 905.0 470 900 C456.7 895.0 438.3 853.3 440 820 C441.7 786.7 475.0 736.7 480 700 C485.0 663.3 476.7 623.3 470 600 C463.3 576.7 451.7 581.7 440 560 C428.3 538.3 415.0 491.7 400 470 C385.0 448.3 361.7 450.0 350 430 C338.3 410.0 321.7 366.7 330 350 Z" fill="#f1ecca"/></g>
<g transform="translate(695 640) scale(0.18498)"><path vector-effect="non-scaling-stroke" d="M640 670 C638.3 655.8 651.7 655.0 660 665 C668.3 675.0 688.3 715.8 690 730 C691.7 744.2 678.3 760.0 670 750 C661.7 740.0 641.7 684.2 640 670 Z" fill="#f1ecca"/></g>
<g transform="translate(695 640) scale(0.18498)"><path vector-effect="non-scaling-stroke" d="M400 155 C401.7 136.7 418.3 148.3 430 160 C441.7 171.7 460.0 206.7 470 225 C480.0 243.3 495.0 265.8 490 270 C485.0 274.2 451.7 250.0 440 250 C428.3 250.0 426.7 285.8 420 270 C413.3 254.2 398.3 173.3 400 155 Z" fill="#f8f3e0"/></g>
<g transform="translate(695 760) scale(0.14802)"><path vector-effect="non-scaling-stroke" d="M560 120 C566.7 91.7 576.7 43.3 600 30 C623.3 16.7 666.7 40.0 700 40 C733.3 40.0 773.3 26.7 800 30 C826.7 33.3 843.3 40.0 860 60 C876.7 80.0 876.7 110.0 900 150 C923.3 190.0 981.7 258.3 1000 300 C1018.3 341.7 1006.7 300.0 1010 400 C1013.3 500.0 1038.3 816.7 1020 900 C1001.7 983.3 926.7 923.3 900 900 C873.3 876.7 876.7 810.0 860 760 C843.3 710.0 813.3 646.7 800 600 C786.7 553.3 796.7 516.7 780 480 C763.3 443.3 726.7 403.3 700 380 C673.3 356.7 636.7 361.7 620 340 C603.3 318.3 610.0 273.3 600 250 C590.0 226.7 566.7 221.7 560 200 C553.3 178.3 553.3 148.3 560 120 Z" fill="#f0ecca"/></g>
<g transform="translate(695 760) scale(0.14802)"><path vector-effect="non-scaling-stroke" d="M0 330 L40 345 L60 400 L120 490 L140 560 L220 600 L300 640 L350 700 L340 740 L420 800 L470 900 L340 900 L340 900 L310 830 L250 760 L180 700 L120 690 L150 650 L100 670 L60 640 L45 590 L60 550 L100 520 L80 480 L40 440 L0 430 Z" fill="#f3ebca"/></g>
</g>
<g id="L_water" fill="#86caf9" stroke="none">
<g transform="translate(695 0) scale(0.18498)"><path vector-effect="non-scaling-stroke" d="M228 265 C235.3 265.8 260.0 272.5 272 270 C284.0 267.5 286.2 254.5 300 250 C313.8 245.5 335.0 244.7 355 243 C375.0 241.3 401.7 244.7 420 240 C438.3 235.3 451.7 224.2 465 215 C478.3 205.8 490.8 193.3 500 185 C509.2 176.7 516.7 168.3 520 165" stroke-width="2.2" fill="none" stroke="#86caf9" stroke-linecap="round"/></g>
<g transform="translate(695 0) scale(0.18498)"><path vector-effect="non-scaling-stroke" d="M274 272 C275.3 275.8 282.7 287.3 282 295 C281.3 302.7 272.0 314.2 270 318" stroke-width="1.8" fill="none" stroke="#86caf9" stroke-linecap="round"/></g>
<g transform="translate(695 0) scale(0.18498)"><path vector-effect="non-scaling-stroke" d="M505 185 C509.2 190.8 524.2 206.7 530 220 C535.8 233.3 540.0 253.3 540 265 C540.0 276.7 531.7 285.8 530 290" stroke-width="1.8" fill="none" stroke="#86caf9" stroke-linecap="round"/></g>
<g transform="translate(695 0) scale(0.18498)"><path vector-effect="non-scaling-stroke" d="M440 238 L445 258" stroke-width="1.6" fill="none" stroke="#86caf9"/></g>
<g transform="translate(695 0) scale(0.18498)"><path vector-effect="non-scaling-stroke" d="M362 232 L368 248" stroke-width="1.6" fill="none" stroke="#86caf9"/></g>
<g transform="translate(695 0) scale(0.18498)"><path vector-effect="non-scaling-stroke" d="M922 168 C926.3 163.3 939.2 141.0 948 140 C956.8 139.0 964.7 161.2 975 162 C985.3 162.8 997.8 150.3 1010 145 C1022.2 139.7 1034.7 130.5 1048 130 C1061.3 129.5 1078.8 135.7 1090 142 C1101.2 148.3 1110.8 157.5 1115 168 C1119.2 178.5 1109.2 196.7 1115 205 C1120.8 213.3 1141.2 211.3 1150 218 C1158.8 224.7 1162.2 237.2 1168 245 C1173.8 252.8 1175.5 257.8 1185 265 C1194.5 272.2 1210.0 286.8 1225 288 C1240.0 289.2 1255.5 276.0 1275 272 C1294.5 268.0 1330.8 265.3 1342 264" stroke-width="2.4" fill="none" stroke="#86caf9" stroke-linecap="round"/></g>
<g transform="translate(695 0) scale(0.18498)"><path vector-effect="non-scaling-stroke" d="M1150 215 L1155 180" stroke-width="2" fill="none" stroke="#86caf9" stroke-linecap="round"/></g>
<g transform="translate(695 0) scale(0.18498)"><path vector-effect="non-scaling-stroke" d="M1170 262 L1140 275" stroke-width="2" fill="none" stroke="#86caf9" stroke-linecap="round"/></g>
<g transform="translate(695 0) scale(0.18498)"><path vector-effect="non-scaling-stroke" d="M1398 465 C1403.0 470.5 1422.2 478.8 1428 498 C1433.8 517.2 1433.5 561.0 1433 580 C1432.5 599.0 1422.2 600.0 1425 612 C1427.8 624.0 1443.2 637.3 1450 652 C1456.8 666.7 1467.3 687.0 1466 700 C1464.7 713.0 1441.3 719.7 1442 730 C1442.7 740.3 1464.3 750.3 1470 762 C1475.7 773.7 1476.0 785.3 1476 800 C1476.0 814.7 1473.0 835.8 1470 850 C1467.0 864.2 1460.0 879.2 1458 885" stroke-width="2.2" fill="none" stroke="#86caf9" stroke-linecap="round"/></g>
<g transform="translate(695 0) scale(0.18498)"><path vector-effect="non-scaling-stroke" d="M1462 772 L1410 786" stroke-width="1.6" fill="none" stroke="#86caf9" stroke-linecap="round"/></g>
<g transform="translate(695 0) scale(0.18498)"><path vector-effect="non-scaling-stroke" d="M1455 712 L1420 712" stroke-width="1.4" fill="none" stroke="#86caf9" stroke-linecap="round"/></g>
<g transform="translate(1015 0) scale(0.18498)"><ellipse cx="612" cy="140" rx="46" ry="17" transform="rotate(-14 612 140)"/></g>
<g transform="translate(1015 0) scale(0.18498)"><ellipse cx="578" cy="182" rx="44" ry="18" transform="rotate(-8 578 182)"/></g>
<g transform="translate(1015 0) scale(0.18498)"><ellipse cx="650" cy="305" rx="12" ry="10" transform="rotate(0 650 305)"/></g>
<g transform="translate(1015 0) scale(0.18498)"><ellipse cx="708" cy="304" rx="22" ry="16" transform="rotate(0 708 304)"/></g>
<g transform="translate(1015 0) scale(0.18498)"><path vector-effect="non-scaling-stroke" d="M640 360 C643.3 354.2 658.3 353.3 665 350 C671.7 346.7 674.2 340.0 680 340 C685.8 340.0 697.5 343.3 700 350 C702.5 356.7 700.0 373.0 695 380 C690.0 387.0 678.3 391.2 670 392 C661.7 392.8 650.0 390.3 645 385 C640.0 379.7 636.7 365.8 640 360 Z"/></g>
<g transform="translate(1015 0) scale(0.18498)"><path vector-effect="non-scaling-stroke" d="M765 560 C768.3 553.0 781.7 548.0 790 548 C798.3 548.0 810.3 553.0 815 560 C819.7 567.0 821.3 583.0 818 590 C814.7 597.0 803.0 602.0 795 602 C787.0 602.0 775.0 597.0 770 590 C765.0 583.0 761.7 567.0 765 560 Z"/></g>
<g transform="translate(1015 0) scale(0.18498)"><ellipse cx="905" cy="52" rx="18" ry="8" transform="rotate(30 905 52)"/></g>
<g transform="translate(1015 0) scale(0.18498)"><path vector-effect="non-scaling-stroke" d="M322 690 L295 715" stroke-width="1.4" fill="none" stroke="#86caf9" stroke-linecap="round"/></g>
<g transform="translate(1180 0) scale(0.18498)"><path vector-effect="non-scaling-stroke" d="M565 170 L575 120 L600 80 L640 40 L690 -10 L1050 -10 L1070 60 L1092 130 L1130 165 L1280 180 L1285 250 L1295 300 L1335 340 L1310 380 L1296 420 L1300 445 L1340 490 L1380 520 L1400 515 L1355 520 L1310 530 L1265 505 L1275 455 L1200 468 L1120 475 L1060 495 L1000 530 L950 520 L890 510 L855 460 L815 425 L760 420 L715 460 L730 410 L765 365 L800 325 L860 305 L790 290 L740 305 L700 340 L640 390 L600 420 L520 445 L470 475 L405 500 L335 490 L320 420 L250 455 L170 480 L150 460 L230 385 L290 330 L330 290 L400 240 L480 205 Z"/></g>
<g transform="translate(1180 0) scale(0.18498)"><path vector-effect="non-scaling-stroke" d="M700 365 C704.2 362.8 722.5 366.2 725 372 C727.5 377.8 719.2 397.8 715 400 C710.8 402.2 702.5 390.8 700 385 C697.5 379.2 695.8 367.2 700 365 Z"/></g>
<g transform="translate(1180 0) scale(0.18498)"><path vector-effect="non-scaling-stroke" d="M1400 560 L1500 590 L1620 600 L1740 592 L1840 640 L1940 640 L1970 700 L2040 770 L2090 830 L2095 900 L800 900 L850 840 L900 780 L940 700 L990 660 L1050 650 L1110 625 L1190 605 L1250 620 L1330 640 L1400 640 L1490 652 L1500 625 L1430 615 L1405 585 Z"/></g>
<g transform="translate(1335 0) scale(0.18498)"><path vector-effect="non-scaling-stroke" d="M1140 572 C1145.0 568.7 1165.0 564.8 1180 562 C1195.0 559.2 1210.0 556.7 1230 555 C1250.0 553.3 1289.7 544.8 1300 552 C1310.3 559.2 1300.3 591.7 1292 598 C1283.7 604.3 1262.8 588.8 1250 590 C1237.2 591.2 1231.7 606.3 1215 605 C1198.3 603.7 1162.5 587.5 1150 582 C1137.5 576.5 1135.0 575.3 1140 572 Z"/></g>
<g transform="translate(1335 0) scale(0.18498)"><path vector-effect="non-scaling-stroke" d="M600 100 C606.7 95.8 626.7 83.3 640 75 C653.3 66.7 673.3 54.2 680 50" stroke-width="1.6" fill="none" stroke="#86caf9" stroke-linecap="round"/></g>
<g transform="translate(1335 0) scale(0.18498)"><path vector-effect="non-scaling-stroke" d="M612 92 L650 85" stroke-width="1.2" fill="none" stroke="#86caf9" stroke-linecap="round"/></g>
<g transform="translate(1335 0) scale(0.18498)"><path vector-effect="non-scaling-stroke" d="M975 345 C977.5 351.7 989.2 370.8 990 385 C990.8 399.2 981.7 422.5 980 430" stroke-width="1.5" fill="none" stroke="#86caf9" stroke-linecap="round"/></g>
<g transform="translate(1335 0) scale(0.18498)"><path vector-effect="non-scaling-stroke" d="M1200 365 C1202.0 371.7 1211.2 392.5 1212 405 C1212.8 417.5 1206.2 434.2 1205 440" stroke-width="2" fill="none" stroke="#86caf9" stroke-linecap="round"/></g>
<g transform="translate(1335 0) scale(0.18498)"><path vector-effect="non-scaling-stroke" d="M1340 380 C1343.3 373.0 1362.5 364.7 1370 368 C1377.5 371.3 1378.3 390.5 1385 400 C1391.7 409.5 1408.3 416.3 1410 425 C1411.7 433.7 1401.7 449.5 1395 452 C1388.3 454.5 1377.5 447.0 1370 440 C1362.5 433.0 1355.0 420.0 1350 410 C1345.0 400.0 1336.7 387.0 1340 380 Z"/></g>
<g transform="translate(1335 0) scale(0.18498)"><ellipse cx="1423" cy="258" rx="16" ry="16" transform="rotate(0 1423 258)"/></g>
<g transform="translate(1335 0) scale(0.18498)"><path vector-effect="non-scaling-stroke" d="M1060 30 L1066 90" stroke-width="1.8" fill="none" stroke="#86caf9" stroke-linecap="round"/></g>
<g transform="translate(1335 0) scale(0.18498)"><path vector-effect="non-scaling-stroke" d="M1220 -5 C1236.7 -10.0 1310.3 -12.5 1330 -5 C1349.7 2.5 1339.7 28.2 1338 40 C1336.3 51.8 1326.3 67.7 1320 66 C1313.7 64.3 1310.0 37.3 1300 30 C1290.0 22.7 1271.7 22.8 1260 22 C1248.3 21.2 1236.7 29.5 1230 25 C1223.3 20.5 1203.3 0.0 1220 -5 Z"/></g>
<g transform="translate(1335 0) scale(0.18498)"><path vector-effect="non-scaling-stroke" d="M1580 255 C1583.3 244.2 1601.7 231.7 1610 225 C1618.3 218.3 1625.0 209.2 1630 215 C1635.0 220.8 1643.3 245.8 1640 260 C1636.7 274.2 1618.3 295.0 1610 300 C1601.7 305.0 1595.0 297.5 1590 290 C1585.0 282.5 1576.7 265.8 1580 255 Z"/></g>
<g transform="translate(1335 0) scale(0.18498)"><path vector-effect="non-scaling-stroke" d="M1640 270 C1645.0 263.3 1665.0 283.3 1680 285 C1695.0 286.7 1721.7 273.3 1730 280 C1738.3 286.7 1736.7 320.0 1730 325 C1723.3 330.0 1703.3 310.0 1690 310 C1676.7 310.0 1658.3 331.7 1650 325 C1641.7 318.3 1635.0 276.7 1640 270 Z"/></g>
<g transform="translate(1335 0) scale(0.18498)"><path vector-effect="non-scaling-stroke" d="M1660 -5 C1665.0 0.8 1688.3 18.3 1690 30 C1691.7 41.7 1673.3 59.2 1670 65" stroke-width="2.2" fill="none" stroke="#86caf9" stroke-linecap="round"/></g>
<g transform="translate(1335 0) scale(0.18498)"><path vector-effect="non-scaling-stroke" d="M1282 280 C1286.7 290.0 1298.7 316.7 1310 340 C1321.3 363.3 1335.0 390.0 1350 420 C1365.0 450.0 1386.3 497.3 1400 520 C1413.7 542.7 1426.7 550.0 1432 556" stroke-width="1.2" fill="none" stroke="#8fc6f0"/></g>
<g transform="translate(0 0) scale(1.00000)"><path vector-effect="non-scaling-stroke" d="M1925.26 172.204 L1920.01 176.241 L1908.1 186.334 L1898.01 192.39 L1881.86 195.418 L1871.76 204.501 L1857.63 209.548 L1847.54 214.594 L1839.47 222.669 L1835.43 230.743 L1829.37 238.817 L1828.36 248.91 L1833.41 254.966 L1825.34 263.04 L1822.31 267.481 L1829.37 271.114 L1833.41 281.207 L1839.47 289.281 L1835.43 292.309 L1821.3 295.337 L1813.23 291.3 L1809.19 299.374 L1793.04 305.43 L1766.8 308.458 L1750.65 315.523 L1740.56 321.579 L1735.51 327.634 L1733.49 330.279 L1736.92 340.371 L1734.91 362.576 L1730.46 372.669 L1720.37 384.78 L1712.3 394.873 L1706.24 398.304 L1703.21 394.873 L1700.19 388.817 L1694.13 386.799 L1695.74 396.891 L1704.22 402.947 L1705.23 415.059 L1700.19 427.17 L1694.13 437.263 L1688.48 441.3 L1687.06 453.411 L1686.06 481.671 L1685 900 L1930 900 L1930 160 Z"/></g>
<g transform="translate(1680 300) scale(0.20186)"><path vector-effect="non-scaling-stroke" d="M45 345 L70 410 L110 432 L128 470 L118 488 L80 480 L62 430 L40 400 Z"/></g>
<g transform="translate(1640 0) scale(0.18498)"><path vector-effect="non-scaling-stroke" d="M1285 -5 L1520 -5 L1520 30 L1430 70 L1380 100 L1330 160 L1300 200 L1260 235 L1225 300 L1200 300 L1205 220 L1200 142 L1160 132 L1100 112 L1040 88 L990 72 L1000 60 L1080 78 L1150 98 L1195 112 L1235 100 L1262 60 Z"/></g>
<g transform="translate(1640 0) scale(0.18498)"><path vector-effect="non-scaling-stroke" d="M1215 250 C1209.2 263.3 1199.2 305.0 1180 330 C1160.8 355.0 1128.3 383.3 1100 400 C1071.7 416.7 1033.8 422.0 1010 430 C986.2 438.0 975.3 441.3 957 448 C938.7 454.7 919.5 463.0 900 470 C880.5 477.0 860.0 480.8 840 490 C820.0 499.2 800.0 511.7 780 525 C760.0 538.3 738.3 554.2 720 570 C701.7 585.8 685.8 601.7 670 620 C654.2 638.3 639.2 659.2 625 680 C610.8 700.8 599.2 729.7 585 745 C570.8 760.3 559.2 762.8 540 772 C520.8 781.2 488.3 788.7 470 800 C451.7 811.3 436.7 833.3 430 840" stroke-width="2.2" fill="none" stroke="#86caf9" stroke-linecap="round"/></g>
<g transform="translate(1640 0) scale(0.18498)"><path vector-effect="non-scaling-stroke" d="M700 585 L740 560" stroke-width="3.2" fill="none" stroke="#86caf9" stroke-linecap="round"/></g>
<g transform="translate(1640 0) scale(0.18498)"><path vector-effect="non-scaling-stroke" d="M583 748 C569.2 752.5 523.8 773.0 500 775 C476.2 777.0 450.0 762.5 440 760" stroke-width="1.4" fill="none" stroke="#86caf9" stroke-linecap="round"/></g>
<g transform="translate(1640 0) scale(0.18498)"><ellipse cx="822" cy="24" rx="46" ry="34" transform="rotate(0 822 24)"/></g>
<g transform="translate(1640 0) scale(0.18498)"><path vector-effect="non-scaling-stroke" d="M290 55 L330 30 L380 45 L420 20 L450 60 L500 90 L470 110 L430 85 L400 100 L360 70 L330 95 Z"/></g>
<g transform="translate(1640 0) scale(0.18498)"><path vector-effect="non-scaling-stroke" d="M0 270 L40 290 L60 250 L100 300 L80 340 L130 360 L150 390 L110 395 L70 370 L30 330 L0 320 Z"/></g>
<g transform="translate(1640 0) scale(0.18498)"><path vector-effect="non-scaling-stroke" d="M195 440 L230 428 L250 450 L235 472 L205 465 Z"/></g>
<g transform="translate(1640 0) scale(0.18498)"><path vector-effect="non-scaling-stroke" d="M20 30 L45 0 L30 60 Z"/></g>
<g transform="translate(1640 0) scale(0.18498)"><path vector-effect="non-scaling-stroke" d="M175 20 L230 40 L215 65 L190 50 Z"/></g>
<g transform="translate(1640 0) scale(0.18498)"><path vector-effect="non-scaling-stroke" d="M1232 592 L1248 640" stroke-width="1.8" fill="none" stroke="#86caf9" stroke-linecap="round"/></g>
<g transform="translate(1640 0) scale(0.18498)"><path vector-effect="non-scaling-stroke" d="M1180 665 C1183.3 670.8 1194.7 687.2 1200 700 C1205.3 712.8 1210.0 735.0 1212 742" stroke-width="2.4" fill="none" stroke="#86caf9" stroke-linecap="round"/></g>
<g transform="translate(1680 150) scale(0.20186)"><path vector-effect="non-scaling-stroke" d="M372 42 C374.7 51.7 388.0 80.3 388 100 C388.0 119.7 376.7 138.3 372 160 C367.3 181.7 360.7 208.0 360 230 C359.3 252.0 366.7 281.7 368 292" stroke-width="2" fill="none" stroke="#86caf9" stroke-linecap="round"/></g>
<g transform="translate(1680 150) scale(0.20186)"><path vector-effect="non-scaling-stroke" d="M758 262 C760.5 259.2 775.5 263.3 780 268 C784.5 272.7 787.5 287.2 785 290 C782.5 292.8 769.5 289.7 765 285 C760.5 280.3 755.5 264.8 758 262 Z"/></g>
<g transform="translate(1680 150) scale(0.20186)"><path vector-effect="non-scaling-stroke" d="M640 318 C642.2 315.8 661.3 318.7 668 322 C674.7 325.3 682.2 335.8 680 338 C677.8 340.2 661.7 338.3 655 335 C648.3 331.7 637.8 320.2 640 318 Z"/></g>
<g transform="translate(695 165) scale(0.18498)"><path vector-effect="non-scaling-stroke" d="M232 318 L234 358" stroke-width="2.2" fill="none" stroke="#86caf9" stroke-linecap="round"/></g>
<g transform="translate(695 165) scale(0.18498)"><path vector-effect="non-scaling-stroke" d="M433 515 L432 560" stroke-width="2.4" fill="none" stroke="#86caf9" stroke-linecap="round"/></g>
<g transform="translate(695 165) scale(0.18498)"><path vector-effect="non-scaling-stroke" d="M436 585 C437.5 589.2 440.7 605.5 445 610 C449.3 614.5 459.2 611.7 462 612" stroke-width="2.4" fill="none" stroke="#86caf9" stroke-linecap="round"/></g>
<g transform="translate(695 165) scale(0.18498)"><path vector-effect="non-scaling-stroke" d="M440 612 L432 635" stroke-width="1.6" fill="none" stroke="#86caf9" stroke-linecap="round"/></g>
<g transform="translate(695 165) scale(0.18498)"><path vector-effect="non-scaling-stroke" d="M14 772 C14.7 778.3 18.7 799.0 18 810 C17.3 821.0 11.3 833.3 10 838" stroke-width="2" fill="none" stroke="#86caf9" stroke-linecap="round"/></g>
<g transform="translate(695 640) scale(0.18498)"><path vector-effect="non-scaling-stroke" d="M0 545 L50 550 L20 580 L0 600 Z"/></g>
<g transform="translate(695 640) scale(0.18498)"><path vector-effect="non-scaling-stroke" d="M625 845 L675 842" stroke-width="1.6" fill="none" stroke="#86caf9" stroke-linecap="round"/></g>
<g transform="translate(695 760) scale(0.14802)"><path vector-effect="non-scaling-stroke" d="M0 430 L40 440 L80 480 L100 520 L60 550 L45 590 L60 640 L100 670 L150 650 L120 690 L180 700 L250 760 L310 830 L340 900 L0 900 Z"/></g>
<g transform="translate(695 760) scale(0.14802)"><path vector-effect="non-scaling-stroke" d="M780 243 L845 246" stroke-width="1.6" fill="none" stroke="#86caf9" stroke-linecap="round"/></g>
</g>
<g id="L_island" fill="#cde2b4" stroke="none" filter="url(#forest)">
<g transform="translate(1180 0) scale(0.18498)"><path vector-effect="non-scaling-stroke" d="M1330 650 L1400 720 L1470 760 L1530 800 L1545 860 L1520 900 L1200 900 L1230 790 L1280 770 L1250 720 L1290 690 Z"/></g>
<g transform="translate(1180 0) scale(0.18498)"><path vector-effect="non-scaling-stroke" d="M940 660 L990 655 L960 720 L900 800 L850 880 L820 900 L800 900 L850 840 L900 780 Z"/></g>
<g transform="translate(1180 0) scale(0.18498)"><path vector-effect="non-scaling-stroke" d="M1010 680 L1030 700 L970 800 L920 900 L890 900 L950 790 Z"/></g>
<g transform="translate(1335 0) scale(0.18498)"><path vector-effect="non-scaling-stroke" d="M700 648 C706.7 646.3 736.7 656.3 760 655 C783.3 653.7 816.7 640.8 840 640 C863.3 639.2 880.0 641.7 900 650 C920.0 658.3 954.2 676.7 960 690 C965.8 703.3 948.3 725.0 935 730 C921.7 735.0 902.5 728.3 880 720 C857.5 711.7 826.7 689.2 800 680 C773.3 670.8 736.7 670.3 720 665 C703.3 659.7 693.3 649.7 700 648 Z"/></g>
<g transform="translate(1335 0) scale(0.18498)"><path vector-effect="non-scaling-stroke" d="M950 800 C956.7 795.0 988.3 806.7 1000 820 C1011.7 833.3 1021.7 868.0 1020 880 C1018.3 892.0 1000.0 897.0 990 892 C980.0 887.0 966.7 865.3 960 850 C953.3 834.7 943.3 805.0 950 800 Z"/></g>
<g transform="translate(1335 0) scale(0.18498)"><path vector-effect="non-scaling-stroke" d="M1180 790 C1180.8 784.2 1194.2 776.7 1200 780 C1205.8 783.3 1215.8 804.2 1215 810 C1214.2 815.8 1200.8 818.3 1195 815 C1189.2 811.7 1179.2 795.8 1180 790 Z"/></g>
<g transform="translate(1680 150) scale(0.20186)"><path vector-effect="non-scaling-stroke" d="M760 650 L790 690 L850 695 L866 670 L850 640 L830 628 L815 640 L845 665 L840 680 L800 675 Z"/></g>
</g>
<g id="L_isand" fill="#f3eccb" stroke="none">
<g transform="translate(1335 0) scale(0.18498)"><path vector-effect="non-scaling-stroke" d="M820 648 C820.0 638.0 840.0 633.0 850 640 C860.0 647.0 880.0 680.0 880 690 C880.0 700.0 860.0 707.0 850 700 C840.0 693.0 820.0 658.0 820 648 Z"/></g>
<g transform="translate(1335 0) scale(0.18498)"><path vector-effect="non-scaling-stroke" d="M660 640 C663.3 636.7 684.2 636.7 690 640 C695.8 643.3 698.3 656.7 695 660 C691.7 663.3 675.8 663.3 670 660 C664.2 656.7 656.7 643.3 660 640 Z" fill="#f8f4e4"/></g>
<g transform="translate(1335 0) scale(0.18498)"><path vector-effect="non-scaling-stroke" d="M905 625 C907.2 620.8 920.8 617.5 925 620 C929.2 622.5 932.2 635.8 930 640 C927.8 644.2 916.2 647.5 912 645 C907.8 642.5 902.8 629.2 905 625 Z" fill="#f5f1dc"/></g>
<g transform="translate(1335 0) scale(0.18498)"><path vector-effect="non-scaling-stroke" d="M930 740 C931.7 736.7 942.0 733.0 945 735 C948.0 737.0 949.7 748.7 948 752 C946.3 755.3 938.0 757.0 935 755 C932.0 753.0 928.3 743.3 930 740 Z" fill="#f5f1dc"/></g>
<g transform="translate(1680 150) scale(0.20186)"><path vector-effect="non-scaling-stroke" d="M290 862 L350 830 L430 800 L520 790 L600 775 L640 760 L600 800 L520 830 L420 865 L330 890 L280 895 Z" fill="#f1e8c9"/></g>
</g>
<g id="L_water2" fill="#86caf9" stroke="none">
<g transform="translate(1680 150) scale(0.20186)"><path vector-effect="non-scaling-stroke" d="M330 850 L420 822 L500 812 L560 815 L480 842 L400 862 L340 868 Z"/></g>
</g>
<g id="L_river" fill="none" stroke="#9fd0f3" stroke-width="1" vector-effect="non-scaling-stroke">
<g transform="translate(695 0) scale(0.18498)"><path vector-effect="non-scaling-stroke" d="M0 230 C10.0 228.3 41.7 221.3 60 220 C78.3 218.7 95.0 217.0 110 222 C125.0 227.0 130.3 242.8 150 250 C169.7 257.2 215.0 262.5 228 265" /></g>
<g transform="translate(695 0) scale(0.18498)"><path vector-effect="non-scaling-stroke" d="M520 162 C540.0 160.0 600.0 154.0 640 150 C680.0 146.0 728.3 138.8 760 138 C791.7 137.2 808.3 141.3 830 145 C851.7 148.7 874.7 155.8 890 160 C905.3 164.2 916.7 168.3 922 170" /></g>
<g transform="translate(695 0) scale(0.18498)"><path vector-effect="non-scaling-stroke" d="M1300 285 C1304.2 292.5 1313.7 317.8 1325 330 C1336.3 342.2 1358.0 339.7 1368 358 C1378.0 376.3 1382.2 426.3 1385 440" /></g>
<g transform="translate(1015 0) scale(0.18498)"><path vector-effect="non-scaling-stroke" d="M605 295 C601.7 301.7 590.0 322.2 585 335 C580.0 347.8 576.7 365.8 575 372" /></g>
<g transform="translate(1015 0) scale(0.18498)"><path vector-effect="non-scaling-stroke" d="M730 312 C736.7 317.5 755.0 337.8 770 345 C785.0 352.2 807.3 345.8 820 355 C832.7 364.2 844.3 384.2 846 400 C847.7 415.8 839.3 435.0 830 450 C820.7 465.0 805.0 480.0 790 490 C775.0 500.0 753.3 500.0 740 510 C726.7 520.0 719.7 536.7 710 550 C700.3 563.3 687.8 573.3 682 590 C676.2 606.7 672.0 628.0 675 650 C678.0 672.0 688.8 702.0 700 722 C711.2 742.0 725.3 758.7 742 770 C758.7 781.3 790.3 786.7 800 790" /></g>
<g transform="translate(1335 0) scale(0.18498)"><path vector-effect="non-scaling-stroke" d="M1300 272 C1313.3 272.7 1360.0 279.7 1380 276 C1400.0 272.3 1411.3 262.7 1420 250 C1428.7 237.3 1425.0 209.7 1432 200 C1439.0 190.3 1447.3 185.3 1462 192 C1476.7 198.7 1497.0 236.0 1520 240 C1543.0 244.0 1580.0 218.3 1600 216 C1620.0 213.7 1633.3 224.3 1640 226" /></g>
<g transform="translate(1015 0) scale(0.18498)"><path vector-effect="non-scaling-stroke" d="M1590 372 L1610 395" /></g>
<g transform="translate(1640 0) scale(0.18498)"><path vector-effect="non-scaling-stroke" d="M-20 650 C-3.3 653.7 55.0 660.3 80 672 C105.0 683.7 101.7 704.5 130 720 C158.3 735.5 216.7 758.3 250 765 C283.3 771.7 298.3 760.8 330 760 C361.7 759.2 421.7 760.0 440 760" /></g>
<g transform="translate(1680 150) scale(0.20186)"><path vector-effect="non-scaling-stroke" d="M250 230 C256.7 240.0 276.7 261.7 290 290 C303.3 318.3 325.0 361.7 330 400 C335.0 438.3 325.0 480.0 320 520 C315.0 560.0 306.7 600.0 300 640 C293.3 680.0 282.5 721.7 280 760 C277.5 798.3 284.2 851.7 285 870" /></g>
<g transform="translate(695 330) scale(0.18498)"><path vector-effect="non-scaling-stroke" d="M0 440 C6.7 431.7 26.7 408.3 40 390 C53.3 371.7 70.0 343.0 80 330 C90.0 317.0 96.7 315.0 100 312" /></g>
<g transform="translate(695 330) scale(0.18498)"><path vector-effect="non-scaling-stroke" d="M100 312 C116.7 313.7 180.0 325.7 200 322 C220.0 318.3 203.3 303.7 220 290 C236.7 276.3 273.3 250.0 300 240 C326.7 230.0 351.7 243.3 380 230 C408.3 216.7 443.3 176.7 470 160 C496.7 143.3 518.3 138.3 540 130 C561.7 121.7 589.2 120.8 600 110 C610.8 99.2 604.2 72.5 605 65" /></g>
<g transform="translate(695 330) scale(0.18498)"><path vector-effect="non-scaling-stroke" d="M540 360 C543.3 370.0 546.7 402.5 560 420 C573.3 437.5 596.7 458.3 620 465 C643.3 471.7 667.5 454.2 700 460 C732.5 465.8 795.8 493.3 815 500" /></g>
<g transform="translate(695 330) scale(0.18498)"><path vector-effect="non-scaling-stroke" d="M350 600 C363.3 598.3 405.0 587.5 430 590 C455.0 592.5 475.0 606.7 500 615 C525.0 623.3 560.8 625.8 580 640 C599.2 654.2 608.3 673.3 615 700 C621.7 726.7 618.3 766.7 620 800 C621.7 833.3 624.2 883.3 625 900" /></g>
<g transform="translate(695 495) scale(0.18498)"><path vector-effect="non-scaling-stroke" d="M610 0 C601.7 13.3 576.7 53.3 560 80 C543.3 106.7 523.3 138.3 510 160 C496.7 181.7 488.3 190.0 480 210 C471.7 230.0 466.7 251.7 460 280 C453.3 308.3 448.3 343.3 440 380 C431.7 416.7 419.2 468.3 410 500 C400.8 531.7 390.8 545.0 385 570 C379.2 595.0 372.5 628.3 375 650 C377.5 671.7 389.2 681.7 400 700 C410.8 718.3 430.0 743.3 440 760 C450.0 776.7 451.7 785.0 460 800 C468.3 815.0 485.0 841.7 490 850" /></g>
<g transform="translate(695 495) scale(0.18498)"><path vector-effect="non-scaling-stroke" d="M0 660 C6.7 656.7 26.7 636.7 40 640 C53.3 643.3 66.7 670.8 80 680 C93.3 689.2 106.7 696.7 120 695 C133.3 693.3 148.3 682.5 160 670 C171.7 657.5 177.5 635.0 190 620 C202.5 605.0 226.7 593.3 235 580 C243.3 566.7 240.8 550.0 240 540 C239.2 530.0 231.7 523.3 230 520" /></g>
</g>
<g id="L_road" fill="none" stroke="#f6cf97" stroke-width="1.1">
<g transform="translate(695 0) scale(0.18498)"><path vector-effect="non-scaling-stroke" d="M0 700 C15.0 704.2 60.0 726.7 90 725 C120.0 723.3 141.7 708.8 180 690 C218.3 671.2 286.7 630.7 320 612 C353.3 593.3 345.0 584.2 380 578 C415.0 571.8 490.0 583.0 530 575 C570.0 567.0 591.7 550.5 620 530 C648.3 509.5 676.7 474.5 700 452 C723.3 429.5 746.3 407.3 760 395 C773.7 382.7 762.0 374.7 782 378 C802.0 381.3 847.0 407.2 880 415 C913.0 422.8 930.0 421.5 980 425 C1030.0 428.5 1110.0 433.5 1180 436 C1250.0 438.5 1346.7 440.3 1400 440 C1453.3 439.7 1445.0 435.7 1500 434 C1555.0 432.3 1691.7 430.7 1730 430" /></g>
<g transform="translate(695 0) scale(0.18498)"><path vector-effect="non-scaling-stroke" d="M180 686 C203.3 686.7 292.5 684.3 320 690 C347.5 695.7 337.5 701.7 345 720 C352.5 738.3 359.2 776.3 365 800 C370.8 823.7 370.8 846.7 380 862 C389.2 877.3 413.3 887.0 420 892" /></g>
<g transform="translate(1015 0) scale(0.18498)"><path vector-effect="non-scaling-stroke" d="M0 428 C26.7 427.5 110.0 423.7 160 425 C210.0 426.3 276.7 434.2 300 436" /></g>
<g transform="translate(1015 0) scale(0.18498)"><path vector-effect="non-scaling-stroke" d="M300 436 C308.3 443.3 333.3 459.3 350 480 C366.7 500.7 383.3 535.0 400 560 C416.7 585.0 428.3 611.7 450 630 C471.7 648.3 498.3 656.3 530 670 C561.7 683.7 611.7 698.7 640 712 C668.3 725.3 673.3 730.3 700 750 C726.7 769.7 775.0 810.0 800 830 C825.0 850.0 841.7 863.3 850 870" /></g>
<g transform="translate(1015 0) scale(0.18498)"><path vector-effect="non-scaling-stroke" d="M245 0 C246.7 33.3 247.8 145.0 255 200 C262.2 255.0 281.2 290.0 288 330 C294.8 370.0 295.7 386.7 296 440 C296.3 493.3 295.7 593.3 290 650 C284.3 706.7 267.3 739.7 262 780 C256.7 820.3 258.7 873.3 258 892" /></g>
<g transform="translate(1015 0) scale(0.18498)"><path vector-effect="non-scaling-stroke" d="M900 892 C900.8 850.0 900.8 695.3 905 640 C909.2 584.7 915.8 586.3 925 560 C934.2 533.7 942.5 497.8 960 482 C977.5 466.2 1018.3 467.8 1030 465" /></g>
<g transform="translate(1015 0) scale(0.18498)"><path vector-effect="non-scaling-stroke" d="M850 870 C875.0 871.7 958.3 876.3 1000 880 C1041.7 883.7 1083.3 890.0 1100 892" /></g>
<g transform="translate(1335 0) scale(0.18498)"><path vector-effect="non-scaling-stroke" d="M490 892 C488.3 870.0 478.3 802.0 480 760 C481.7 718.0 490.8 675.8 500 640 C509.2 604.2 529.2 560.8 535 545" /></g>
<g transform="translate(1180 0) scale(0.18498)"><path vector-effect="non-scaling-stroke" d="M0 900 C1.7 856.7 3.3 700.0 10 640 C16.7 580.0 26.7 566.7 40 540 C53.3 513.3 71.7 493.0 90 480 C108.3 467.0 140.0 465.0 150 462" /></g>
<g transform="translate(1180 0) scale(0.18498)"><path vector-effect="non-scaling-stroke" d="M1330 892 C1329.2 860.0 1323.3 748.7 1325 700 C1326.7 651.3 1332.5 627.5 1340 600 C1347.5 572.5 1365.0 545.8 1370 535" /></g>
<g transform="translate(1680 150) scale(0.20186)"><path vector-effect="non-scaling-stroke" d="M40 600 C56.7 593.3 103.3 576.7 140 560 C176.7 543.3 230.0 523.3 260 500 C290.0 476.7 308.3 453.3 320 420 C331.7 386.7 333.3 336.7 330 300 C326.7 263.3 303.3 233.3 300 200 C296.7 166.7 308.3 116.7 310 100" /></g>
<g transform="translate(1680 150) scale(0.20186)"><path vector-effect="non-scaling-stroke" d="M320 530 C336.7 541.7 386.7 586.7 420 600 C453.3 613.3 490.0 613.3 520 610 C550.0 606.7 571.7 585.8 600 580 C628.3 574.2 675.0 575.8 690 575" /></g>
<g transform="translate(1680 150) scale(0.20186)"><path vector-effect="non-scaling-stroke" d="M280 880 C288.3 866.7 300.0 826.7 330 800 C360.0 773.3 428.3 746.7 460 720 C491.7 693.3 496.7 660.0 520 640 C543.3 620.0 586.7 606.7 600 600" /></g>
<g transform="translate(1680 150) scale(0.20186)"><path vector-effect="non-scaling-stroke" d="M690 575 C683.3 559.2 661.7 512.5 650 480 C638.3 447.5 638.3 410.0 620 380 C601.7 350.0 565.0 321.7 540 300 C515.0 278.3 486.7 270.0 470 250 C453.3 230.0 452.5 195.8 440 180 C427.5 164.2 402.5 159.2 395 155" /></g>
<g transform="translate(1680 150) scale(0.20186)"><path vector-effect="non-scaling-stroke" d="M885 185 C880.8 194.2 872.5 220.8 860 240 C847.5 259.2 821.7 280.0 810 300 C798.3 320.0 793.3 350.0 790 360" /></g>
<g transform="translate(1680 150) scale(0.20186)"><path vector-effect="non-scaling-stroke" d="M40 760 C58.3 763.3 110.0 780.0 150 780 C190.0 780.0 258.3 763.3 280 760" /></g>
<g transform="translate(1680 300) scale(0.20186)"><path vector-effect="non-scaling-stroke" d="M270 150 C258.3 161.7 221.7 195.0 200 220 C178.3 245.0 161.7 281.7 140 300 C118.3 318.3 88.3 320.0 70 330 C51.7 340.0 36.7 355.0 30 360" /></g>
<g transform="translate(1680 300) scale(0.20186)"><path vector-effect="non-scaling-stroke" d="M260 150 C255.0 166.7 243.3 216.7 230 250 C216.7 283.3 195.0 318.3 180 350 C165.0 381.7 146.7 425.0 140 440" /></g>
<g transform="translate(1640 0) scale(0.18498)"><path vector-effect="non-scaling-stroke" d="M248 765 C261.7 760.8 298.0 744.2 330 740 C362.0 735.8 397.8 738.8 440 740 C482.2 741.2 549.7 753.7 583 747 C616.3 740.3 610.5 724.5 640 700 C669.5 675.5 723.3 630.0 760 600 C796.7 570.0 827.2 545.3 860 520 C892.8 494.7 940.8 460.0 957 448" /></g>
<g transform="translate(1640 0) scale(0.18498)"><path vector-effect="non-scaling-stroke" d="M583 747 C602.5 749.2 660.5 761.2 700 760 C739.5 758.8 793.3 730.0 820 740 C846.7 750.0 853.3 806.7 860 820" /></g>
<g transform="translate(1640 0) scale(0.18498)"><path vector-effect="non-scaling-stroke" d="M957 448 C964.2 463.3 984.5 513.0 1000 540 C1015.5 567.0 1041.7 598.3 1050 610" /></g>
<g transform="translate(1640 0) scale(0.18498)"><path vector-effect="non-scaling-stroke" d="M248 765 C243.3 774.2 218.0 798.8 220 820 C222.0 841.2 253.3 880.0 260 892" /></g>
<g transform="translate(695 165) scale(0.18498)"><path vector-effect="non-scaling-stroke" d="M420 0 C423.3 6.7 431.7 21.7 440 40 C448.3 58.3 464.2 75.0 470 110 C475.8 145.0 468.3 218.3 475 250 C481.7 281.7 502.5 281.7 510 300 C517.5 318.3 518.3 350.0 520 360" /></g>
<g transform="translate(695 165) scale(0.18498)"><path vector-effect="non-scaling-stroke" d="M470 110 C480.0 115.0 510.0 133.3 530 140 C550.0 146.7 570.0 152.5 590 150 C610.0 147.5 618.3 129.2 650 125 C681.7 120.8 752.5 126.2 780 125 C807.5 123.8 809.2 119.2 815 118" /></g>
<g transform="translate(695 165) scale(0.18498)"><path vector-effect="non-scaling-stroke" d="M525 440 C537.5 440.0 574.2 436.7 600 440 C625.8 443.3 659.2 450.0 680 460 C700.8 470.0 715.8 478.3 725 500 C734.2 521.7 728.3 563.3 735 590 C741.7 616.7 764.2 625.0 765 660 C765.8 695.0 745.0 760.0 740 800 C735.0 840.0 735.8 883.3 735 900" /></g>
<g transform="translate(695 165) scale(0.18498)"><path vector-effect="non-scaling-stroke" d="M0 715 C6.7 715.8 20.0 725.0 40 720 C60.0 715.0 91.7 689.2 120 685 C148.3 680.8 181.7 695.8 210 695 C238.3 694.2 261.7 685.0 290 680 C318.3 675.0 345.0 665.8 380 665 C415.0 664.2 463.3 662.5 500 675 C536.7 687.5 573.3 720.8 600 740 C626.7 759.2 643.3 779.2 660 790 C676.7 800.8 674.2 803.3 700 805 C725.8 806.7 795.8 800.8 815 800" /></g>
<g transform="translate(695 330) scale(0.18498)"><path vector-effect="non-scaling-stroke" d="M0 355 C6.7 354.2 23.3 357.5 40 350 C56.7 342.5 76.7 313.3 100 310 C123.3 306.7 160.0 331.7 180 330 C200.0 328.3 206.7 311.7 220 300 C233.3 288.3 246.7 270.0 260 260 C273.3 250.0 280.0 244.7 300 240 C320.0 235.3 353.3 237.3 380 232 C406.7 226.7 435.0 210.8 460 208 C485.0 205.2 515.3 208.8 530 215 C544.7 221.2 541.3 245.0 548 245 C554.7 245.0 554.7 223.3 570 215 C585.3 206.7 612.5 197.5 640 195 C667.5 192.5 719.2 199.2 735 200" /></g>
<g transform="translate(695 330) scale(0.18498)"><path vector-effect="non-scaling-stroke" d="M735 0 C735.8 16.7 738.3 66.7 740 100 C741.7 133.3 740.0 166.7 745 200 C750.0 233.3 762.5 266.7 770 300 C777.5 333.3 785.0 366.7 790 400 C795.0 433.3 803.3 473.3 800 500 C796.7 526.7 775.8 540.0 770 560 C764.2 580.0 760.0 596.7 765 620 C770.0 643.3 793.3 653.3 800 700 C806.7 746.7 804.2 866.7 805 900" /></g>
<g transform="translate(695 495) scale(0.18498)"><path vector-effect="non-scaling-stroke" d="M0 235 C10.0 225.8 43.3 192.5 60 180 C76.7 167.5 85.0 165.8 100 160 C115.0 154.2 130.0 144.2 150 145 C170.0 145.8 200.0 155.8 220 165 C240.0 174.2 256.7 188.3 270 200 C283.3 211.7 280.0 225.8 300 235 C320.0 244.2 361.7 255.0 390 255 C418.3 255.0 448.3 239.2 470 235 C491.7 230.8 498.3 228.3 520 230 C541.7 231.7 570.0 241.7 600 245 C630.0 248.3 664.2 247.5 700 250 C735.8 252.5 795.8 258.3 815 260" /></g>
<g transform="translate(695 495) scale(0.18498)"><path vector-effect="non-scaling-stroke" d="M790 0 C788.3 10.0 790.0 38.3 780 60 C770.0 81.7 745.0 111.7 730 130 C715.0 148.3 705.0 166.7 690 170 C675.0 173.3 655.0 157.5 640 150 C625.0 142.5 609.2 130.3 600 125 C590.8 119.7 587.5 119.2 585 118" /></g>
<g transform="translate(695 495) scale(0.18498)"><path vector-effect="non-scaling-stroke" d="M585 118 C574.2 126.7 537.5 153.8 520 170 C502.5 186.2 490.8 195.0 480 215 C469.2 235.0 461.7 262.5 455 290 C448.3 317.5 444.2 355.0 440 380 C435.8 405.0 436.7 420.0 430 440 C423.3 460.0 409.2 478.3 400 500 C390.8 521.7 380.3 546.7 375 570 C369.7 593.3 364.7 620.0 368 640 C371.3 660.0 384.7 676.7 395 690 C405.3 703.3 420.0 706.7 430 720 C440.0 733.3 446.7 751.7 455 770 C463.3 788.3 472.5 815.0 480 830 C487.5 845.0 496.7 855.0 500 860" /></g>
<g transform="translate(695 495) scale(0.18498)"><path vector-effect="non-scaling-stroke" d="M0 755 C16.7 758.3 76.7 774.2 100 775 C123.3 775.8 123.3 758.3 140 760 C156.7 761.7 173.3 783.3 200 785 C226.7 786.7 271.7 771.7 300 770 C328.3 768.3 348.3 783.3 370 775 C391.7 766.7 420.0 729.2 430 720" /></g>
<g transform="translate(695 640) scale(0.18498)"><path vector-effect="non-scaling-stroke" d="M470 110 L500 135" /></g>
<g transform="translate(695 640) scale(0.18498)"><path vector-effect="non-scaling-stroke" d="M490 290 C491.7 300.0 495.3 328.3 500 350 C504.7 371.7 515.0 408.3 518 420" /></g>
<g transform="translate(695 640) scale(0.18498)"><path vector-effect="non-scaling-stroke" d="M320 370 C326.7 374.2 345.0 388.3 360 395 C375.0 401.7 401.7 407.5 410 410" /></g>
<g transform="translate(695 640) scale(0.18498)"><path vector-effect="non-scaling-stroke" d="M430 420 C436.7 425.8 456.7 441.7 470 455 C483.3 468.3 503.3 492.5 510 500" /></g>
<g transform="translate(695 640) scale(0.18498)"><path vector-effect="non-scaling-stroke" d="M640 180 C650.0 183.3 680.0 194.2 700 200 C720.0 205.8 740.8 214.2 760 215 C779.2 215.8 805.8 206.7 815 205" /></g>
<g transform="translate(695 640) scale(0.18498)"><path vector-effect="non-scaling-stroke" d="M655 555 L700 560" /></g>
<g transform="translate(695 640) scale(0.18498)"><path vector-effect="non-scaling-stroke" d="M780 560 L815 545" /></g>
<g transform="translate(695 640) scale(0.18498)"><path vector-effect="non-scaling-stroke" d="M660 735 C665.0 742.5 682.5 767.5 690 780 C697.5 792.5 702.5 805.0 705 810" /></g>
<g transform="translate(695 640) scale(0.18498)"><path vector-effect="non-scaling-stroke" d="M710 825 L745 870" /></g>
<g transform="translate(695 760) scale(0.14802)"><path vector-effect="non-scaling-stroke" d="M0 300 C6.7 308.3 28.3 330.0 40 350 C51.7 370.0 56.7 395.0 70 420 C83.3 445.0 110.0 468.3 120 500 C130.0 531.7 128.3 591.7 130 610" /></g>
<g transform="translate(695 760) scale(0.14802)"><path vector-effect="non-scaling-stroke" d="M830 100 C838.3 116.7 863.3 170.0 880 200 C896.7 230.0 921.7 258.3 930 280 C938.3 301.7 916.7 311.7 930 330 C943.3 348.3 996.7 380.0 1010 390" /></g>
<g transform="translate(695 760) scale(0.14802)"><path vector-effect="non-scaling-stroke" d="M280 700 C288.3 710.0 310.0 738.3 330 760 C350.0 781.7 381.7 806.7 400 830 C418.3 853.3 433.3 888.3 440 900" /></g>
</g>
<g id="L_roady" fill="none" stroke="#f8e39a" stroke-width="1.8">
<g transform="translate(1335 0) scale(0.18498)"><path vector-effect="non-scaling-stroke" d="M215 0 C235.8 1.7 309.2 1.7 340 10 C370.8 18.3 383.3 35.0 400 50 C416.7 65.0 430.0 81.7 440 100 C450.0 118.3 459.2 138.0 460 160 C460.8 182.0 445.0 210.0 445 232 C445.0 254.0 451.7 274.0 460 292 C468.3 310.0 493.3 323.7 495 340 C496.7 356.3 475.0 376.7 470 390 C465.0 403.3 456.7 411.3 465 420 C473.3 428.7 504.2 433.7 520 442 C535.8 450.3 553.3 465.3 560 470" stroke-width="1.6" /></g>
<g transform="translate(1335 0) scale(0.18498)"><path vector-effect="non-scaling-stroke" d="M535 532 C545.8 536.7 572.5 552.0 600 560 C627.5 568.0 666.7 575.0 700 580 C733.3 585.0 766.7 590.0 800 590 C833.3 590.0 866.7 586.7 900 580 C933.3 573.3 973.3 559.2 1000 550 C1026.7 540.8 1041.3 530.8 1060 525 C1078.7 519.2 1088.7 510.8 1112 515 C1135.3 519.2 1168.7 541.5 1200 550 C1231.3 558.5 1263.3 563.3 1300 566 C1336.7 568.7 1386.7 563.7 1420 566 C1453.3 568.3 1470.0 574.0 1500 580 C1530.0 586.0 1573.3 590.3 1600 602 C1626.7 613.7 1638.3 630.3 1660 650 C1681.7 669.7 1718.3 708.3 1730 720" /></g>
<g transform="translate(1335 0) scale(0.18498)"><path vector-effect="non-scaling-stroke" d="M1060 525 C1066.7 534.2 1088.3 560.8 1100 580 C1111.7 599.2 1123.3 620.0 1130 640 C1136.7 660.0 1128.3 679.7 1140 700 C1151.7 720.3 1183.3 745.3 1200 762 C1216.7 778.7 1231.7 778.3 1240 800 C1248.3 821.7 1248.3 876.7 1250 892" stroke-width="1.3" stroke="#f3d79a" /></g>
<g transform="translate(1335 0) scale(0.18498)"><path vector-effect="non-scaling-stroke" d="M1150 40 C1154.2 50.0 1166.7 80.0 1175 100 C1183.3 120.0 1187.5 138.0 1200 160 C1212.5 182.0 1238.0 212.7 1250 232 C1262.0 251.3 1272.0 259.7 1272 276 C1272.0 292.3 1254.3 309.3 1250 330 C1245.7 350.7 1245.0 376.7 1246 400 C1247.0 423.3 1247.0 444.0 1256 470 C1265.0 496.0 1292.7 541.7 1300 556" /></g>
<g transform="translate(1335 0) scale(0.18498)"><path vector-effect="non-scaling-stroke" d="M1200 152 C1208.3 150.3 1234.7 144.7 1250 142 C1265.3 139.3 1285.0 137.0 1292 136" /></g>
<g transform="translate(1180 0) scale(0.18498)"><path vector-effect="non-scaling-stroke" d="M-10 10 C41.7 10.3 208.3 7.0 300 12 C391.7 17.0 496.7 30.3 540 40 C583.3 49.7 552.5 62.5 560 70 C567.5 77.5 580.8 82.5 585 85" stroke-width="1.4" /></g>
</g>
<g id="L_dots" fill="none" stroke="#a3a3a3" stroke-width="1" stroke-dasharray="1.6 1.8">
<g transform="translate(695 0) scale(0.18498)"><path vector-effect="non-scaling-stroke" d="M883 0 L883 860" /></g>
<g transform="translate(695 0) scale(0.18498)"><path vector-effect="non-scaling-stroke" d="M0 860 L883 860" /></g>
<g transform="translate(695 0) scale(0.18498)"><path vector-effect="non-scaling-stroke" d="M883 648 L1730 648" /></g>
<g transform="translate(1015 0) scale(0.18498)"><path vector-effect="non-scaling-stroke" d="M0 648 L332 648" /></g>
<g transform="translate(1015 0) scale(0.18498)"><path vector-effect="non-scaling-stroke" d="M240 0 C239.7 25.0 233.0 113.0 238 150 C243.0 187.0 261.3 192.0 270 222 C278.7 252.0 285.0 293.7 290 330 C295.0 366.3 298.3 408.3 300 440 C301.7 471.7 295.0 493.3 300 520 C305.0 546.7 326.3 571.7 330 600 C333.7 628.3 328.3 670.0 322 690 C315.7 710.0 294.0 708.3 292 720 C290.0 731.7 300.3 748.3 310 760 C319.7 771.7 343.0 768.0 350 790 C357.0 812.0 351.7 875.0 352 892" /></g>
<g transform="translate(1015 0) scale(0.18498)"><path vector-effect="non-scaling-stroke" d="M1010 470 C1009.7 491.7 1019.3 570.0 1008 600 C996.7 630.0 956.7 633.3 942 650 C927.3 666.7 922.0 681.7 920 700 C918.0 718.3 926.7 728.0 930 760 C933.3 792.0 938.3 870.0 940 892" /></g>
<g transform="translate(1015 0) scale(0.18498)"><path vector-effect="non-scaling-stroke" d="M1310 510 C1316.7 517.7 1321.7 542.7 1350 556 C1378.3 569.3 1445.0 577.7 1480 590 C1515.0 602.3 1530.0 620.0 1560 630 C1590.0 640.0 1636.7 640.0 1660 650 C1683.3 660.0 1689.2 676.7 1700 690 C1710.8 703.3 1720.8 723.3 1725 730" /></g>
<g transform="translate(1015 0) scale(0.18498)"><path vector-effect="non-scaling-stroke" d="M1050 465 L1260 336 L1380 336 M1462 180 L1380 340 L1312 492" stroke="#b5b5c6" stroke-width=".8"/></g>
<g transform="translate(1335 0) scale(0.18498)"><path vector-effect="non-scaling-stroke" d="M1295 0 L1295 270" /></g>
<g transform="translate(1335 0) scale(0.18498)"><path vector-effect="non-scaling-stroke" d="M1300 282 C1308.3 305.0 1328.3 373.7 1350 420 C1371.7 466.3 1405.0 534.0 1430 560 C1455.0 586.0 1471.7 569.3 1500 576 C1528.3 582.7 1566.7 584.3 1600 600 C1633.3 615.7 1678.3 654.7 1700 670 C1721.7 685.3 1725.0 688.3 1730 692" /></g>
<g transform="translate(1180 0) scale(0.18498)"><path vector-effect="non-scaling-stroke" d="M100 470 C103.0 471.7 115.5 458.3 118 480 C120.5 501.7 126.3 571.7 115 600 C103.7 628.3 65.8 633.3 50 650 C34.2 666.7 23.3 681.7 20 700 C16.7 718.3 26.7 728.0 30 760 C33.3 792.0 38.3 870.0 40 892" /></g>
<g transform="translate(1180 0) scale(0.18498)"><path vector-effect="non-scaling-stroke" d="M420 510 C426.7 517.7 431.7 542.7 460 556 C488.3 569.3 555.0 577.7 590 590 C625.0 602.3 640.0 620.0 670 630 C700.0 640.0 746.7 640.0 770 650 C793.3 660.0 800.0 675.0 810 690 C820.0 705.0 828.3 723.3 830 740 C831.7 756.7 816.7 780.0 820 790 C823.3 800.0 845.0 798.3 850 800" /></g>
<g transform="translate(1180 0) scale(0.18498)"><path vector-effect="non-scaling-stroke" d="M900 760 L1070 805 L1000 900" stroke="#b5b5c6" stroke-width=".8"/></g>
<g transform="translate(1680 150) scale(0.20186)"><path vector-effect="non-scaling-stroke" d="M640 40 C637.5 53.3 631.7 96.7 625 120 C618.3 143.3 610.8 168.3 600 180 C589.2 191.7 570.0 170.0 560 190 C550.0 210.0 550.0 265.0 540 300 C530.0 335.0 510.0 366.7 500 400 C490.0 433.3 485.0 463.3 480 500 C475.0 536.7 471.7 600.0 470 620" /></g>
<g transform="translate(1680 150) scale(0.20186)"><path vector-effect="non-scaling-stroke" d="M700 0 C702.0 55.0 706.2 260.0 712 330 C717.8 400.0 731.2 405.0 735 420" /></g>
<g transform="translate(1680 150) scale(0.20186)"><path vector-effect="non-scaling-stroke" d="M380 300 C380.8 330.0 391.7 423.3 385 480 C378.3 536.7 346.7 590.0 340 640 C333.3 690.0 344.2 756.7 345 780" /></g>
<g transform="translate(1680 150) scale(0.20186)"><path vector-effect="non-scaling-stroke" d="M380 495 L700 505" /></g>
<g transform="translate(1680 150) scale(0.20186)"><path vector-effect="non-scaling-stroke" d="M345 632 L600 640 L700 625" /></g>
<g transform="translate(1680 150) scale(0.20186)"><path vector-effect="non-scaling-stroke" d="M590 640 L600 760" /></g>
<g transform="translate(1680 150) scale(0.20186)"><path vector-effect="non-scaling-stroke" d="M40 640 C48.3 641.7 75.0 636.7 90 650 C105.0 663.3 111.7 701.7 130 720 C148.3 738.3 178.3 746.7 200 760 C221.7 773.3 250.0 793.3 260 800" /></g>
<g transform="translate(1640 0) scale(0.18498)"><path vector-effect="non-scaling-stroke" d="M970 855 L985 892" /></g>
<g transform="translate(695 165) scale(0.18498)"><path vector-effect="non-scaling-stroke" d="M0 830 L815 830" /></g>
<g transform="translate(695 165) scale(0.18498)"><path vector-effect="non-scaling-stroke" d="M95 830 L95 900" /></g>
<g transform="translate(695 330) scale(0.18498)"><path vector-effect="non-scaling-stroke" d="M95 0 L95 900" /></g>
<g transform="translate(695 330) scale(0.18498)"><path vector-effect="non-scaling-stroke" d="M0 752 L815 752" /></g>
<g transform="translate(695 495) scale(0.18498)"><path vector-effect="non-scaling-stroke" d="M95 0 L95 900" /></g>
<g transform="translate(695 495) scale(0.18498)"><path vector-effect="non-scaling-stroke" d="M620 818 L815 818" /></g>
<g transform="translate(695 640) scale(0.18498)"><path vector-effect="non-scaling-stroke" d="M120 170 C125.0 177.5 150.8 203.3 150 215 C149.2 226.7 118.3 227.5 115 240 C111.7 252.5 122.5 280.0 130 290 C137.5 300.0 153.3 290.0 160 300 C166.7 310.0 169.2 326.7 170 350 C170.8 373.3 168.3 415.0 165 440 C161.7 465.0 150.8 480.0 150 500 C149.2 520.0 155.0 540.0 160 560 C165.0 580.0 175.8 597.5 180 620 C184.2 642.5 191.7 679.7 185 695 C178.3 710.3 155.0 709.2 140 712 C125.0 714.8 101.7 704.0 95 712 C88.3 720.0 95.8 745.3 100 760 C104.2 774.7 111.7 785.0 120 800 C128.3 815.0 142.5 833.3 150 850 C157.5 866.7 162.5 891.7 165 900" /></g>
<g transform="translate(695 760) scale(0.14802)"><path vector-effect="non-scaling-stroke" d="M220 0 C221.7 10.0 248.3 46.7 230 60 C211.7 73.3 123.3 60.0 110 80 C96.7 100.0 135.0 146.7 150 180 C165.0 213.3 189.2 250.0 200 280 C210.8 310.0 201.7 347.5 215 360 C228.3 372.5 262.5 345.0 280 355 C297.5 365.0 311.7 399.2 320 420 C328.3 440.8 321.7 458.3 330 480 C338.3 501.7 350.0 536.7 370 550 C390.0 563.3 430.0 548.3 450 560 C470.0 571.7 475.0 603.3 490 620 C505.0 636.7 521.7 650.0 540 660 C558.3 670.0 585.0 683.3 600 680 C615.0 676.7 628.3 653.3 630 640 C631.7 626.7 606.7 620.0 610 600 C613.3 580.0 638.3 548.3 650 520 C661.7 491.7 670.0 450.0 680 430 C690.0 410.0 690.0 398.3 710 400 C730.0 401.7 768.3 425.0 800 440 C831.7 455.0 865.0 478.3 900 490 C935.0 501.7 991.7 506.7 1010 510" /></g>
<g transform="translate(695 760) scale(0.14802)"><path vector-effect="non-scaling-stroke" d="M215 360 C204.2 378.3 167.5 443.3 150 470 C132.5 496.7 116.7 511.7 110 520" /></g>
<g transform="translate(695 760) scale(0.14802)"><path vector-effect="non-scaling-stroke" d="M540 660 C530.0 666.7 488.3 683.3 480 700 C471.7 716.7 476.7 736.7 490 760 C503.3 783.3 541.7 816.7 560 840 C578.3 863.3 593.3 890.0 600 900" /></g>
</g>
<g id="L_gray" fill="none" stroke="#8f8f8f" stroke-width="1.2">
<g transform="translate(1180 0) scale(0.18498)"><path vector-effect="non-scaling-stroke" d="M575 175 L735 100 L1288 430 L1360 522" /></g>
<g transform="translate(1180 0) scale(0.18498)"><path vector-effect="non-scaling-stroke" d="M1488 672 L1658 775 L1673 892" /></g>
</g>
<g id="L_marker" fill="#fff" stroke="#4a4a4a" stroke-width="1.5">
<circle cx="938.8" cy="21.8" r="3.2"/>
<circle cx="953.6" cy="83.2" r="3.2"/>
<circle cx="728.7" cy="126.5" r="3.2"/>
<circle cx="1070.1" cy="80.5" r="3.2"/>
<circle cx="1173.2" cy="159.5" r="3.2"/>
<circle cx="1290.2" cy="13.9" r="3.2"/>
<circle cx="1434.3" cy="95.3" r="2.8"/>
<circle cx="1575.8" cy="104.5" r="3.2"/>
<circle cx="1521.3" cy="11.1" r="3.2"/>
<circle cx="1685.9" cy="141.5" r="3.2"/>
<circle cx="1747.8" cy="138.2" r="3.2"/>
<circle cx="1817.0" cy="82.9" r="3.2"/>
<circle cx="1758.3" cy="180.7" r="3.2"/>
<circle cx="1858.6" cy="187.3" r="3.2"/>
<circle cx="1819.9" cy="266.1" r="2.8"/>
<circle cx="1734.9" cy="328.6" r="3.2"/>
<circle cx="791.9" cy="246.4" r="3.2"/>
<circle cx="836.0" cy="313.4" r="3.2"/>
<circle cx="831.0" cy="367.0" r="3.2"/>
<circle cx="835.6" cy="401.2" r="3.2"/>
<circle cx="803.2" cy="516.8" r="3.2"/>
<circle cx="786.9" cy="654.5" r="2.6"/>
<circle cx="799.1" cy="760.2" r="3.2"/>
<circle cx="760.9" cy="885.8" r="3.2"/>
</g>
<g id="L_label" >
<text class="lab" x="922.0" y="15.7" font-size="13" textLength="35.1" lengthAdjust="spacingAndGlyphs">Minot</text>
<text class="lab2" x="922.0" y="15.7" font-size="13" textLength="35.1" lengthAdjust="spacingAndGlyphs">Minot</text>
<text class="lab" x="925.9" y="77.0" font-size="13" textLength="57.0" lengthAdjust="spacingAndGlyphs">Bismarck</text>
<text class="lab2" x="925.9" y="77.0" font-size="13" textLength="57.0" lengthAdjust="spacingAndGlyphs">Bismarck</text>
<text class="lab" x="706.7" y="120.2" font-size="13" textLength="44.4" lengthAdjust="spacingAndGlyphs">Billings</text>
<text class="lab2" x="706.7" y="120.2" font-size="13" textLength="44.4" lengthAdjust="spacingAndGlyphs">Billings</text>
<text class="lab" x="1053.5" y="74.0" font-size="13" textLength="34.2" lengthAdjust="spacingAndGlyphs">Fargo</text>
<text class="lab2" x="1053.5" y="74.0" font-size="13" textLength="34.2" lengthAdjust="spacingAndGlyphs">Fargo</text>
<text class="lab" x="1136.2" y="153.5" font-size="13" textLength="74.5" lengthAdjust="spacingAndGlyphs">Minneapolis</text>
<text class="lab2" x="1136.2" y="153.5" font-size="13" textLength="74.5" lengthAdjust="spacingAndGlyphs">Minneapolis</text>
<text class="st" x="1135.6" y="118.4" font-size="10.5" textLength="70.8" lengthAdjust="spacingAndGlyphs">MINNESOTA</text>
<text class="st2" x="1135.6" y="118.4" font-size="10.5" textLength="70.8" lengthAdjust="spacingAndGlyphs">MINNESOTA</text>
<text class="lab" x="1254.0" y="7.4" font-size="13" textLength="74.5" lengthAdjust="spacingAndGlyphs">Thunder Bay</text>
<text class="lab2" x="1254.0" y="7.4" font-size="13" textLength="74.5" lengthAdjust="spacingAndGlyphs">Thunder Bay</text>
<text class="lab" x="1387.3" y="89.3" font-size="13" textLength="94.0" lengthAdjust="spacingAndGlyphs">Sault Ste. Marie</text>
<text class="lab2" x="1387.3" y="89.3" font-size="13" textLength="94.0" lengthAdjust="spacingAndGlyphs">Sault Ste. Marie</text>
<text class="lab" x="1546.8" y="98.0" font-size="13" textLength="59.2" lengthAdjust="spacingAndGlyphs">North Bay</text>
<text class="lab2" x="1546.8" y="98.0" font-size="13" textLength="59.2" lengthAdjust="spacingAndGlyphs">North Bay</text>
<text class="lab" x="1497.4" y="4.1" font-size="13" textLength="50.7" lengthAdjust="spacingAndGlyphs">Timmins</text>
<text class="lab2" x="1497.4" y="4.1" font-size="13" textLength="50.7" lengthAdjust="spacingAndGlyphs">Timmins</text>
<text class="lab" x="1662.2" y="133.6" font-size="14" textLength="48.1" lengthAdjust="spacingAndGlyphs">Ottawa</text>
<text class="lab2" x="1662.2" y="133.6" font-size="14" textLength="48.1" lengthAdjust="spacingAndGlyphs">Ottawa</text>
<text class="lab" x="1721.4" y="131.7" font-size="13" textLength="53.3" lengthAdjust="spacingAndGlyphs">Montreal</text>
<text class="lab2" x="1721.4" y="131.7" font-size="13" textLength="53.3" lengthAdjust="spacingAndGlyphs">Montreal</text>
<text class="st" x="1858.6" y="149.5" font-size="10.5" textLength="37.6" lengthAdjust="spacingAndGlyphs">MAINE</text>
<text class="st2" x="1858.6" y="149.5" font-size="10.5" textLength="37.6" lengthAdjust="spacingAndGlyphs">MAINE</text>
<text class="lab" x="1728.0" y="174.2" font-size="13" textLength="61.6" lengthAdjust="spacingAndGlyphs">Burlington</text>
<text class="lab2" x="1728.0" y="174.2" font-size="13" textLength="61.6" lengthAdjust="spacingAndGlyphs">Burlington</text>
<text class="lab" x="1834.4" y="180.7" font-size="13" textLength="50.5" lengthAdjust="spacingAndGlyphs">Augusta</text>
<text class="lab2" x="1834.4" y="180.7" font-size="13" textLength="50.5" lengthAdjust="spacingAndGlyphs">Augusta</text>
<text class="st" x="1792.0" y="212.8" font-size="10.5" textLength="25.6" lengthAdjust="spacingAndGlyphs">NEW</text>
<text class="st2" x="1792.0" y="212.8" font-size="10.5" textLength="25.6" lengthAdjust="spacingAndGlyphs">NEW</text>
<text class="st" x="1769.8" y="226.3" font-size="10.5" textLength="70.6" lengthAdjust="spacingAndGlyphs">HAMPSHIRE</text>
<text class="st2" x="1769.8" y="226.3" font-size="10.5" textLength="70.6" lengthAdjust="spacingAndGlyphs">HAMPSHIRE</text>
<text class="lab" x="1800.1" y="259.0" font-size="13" textLength="42.4" lengthAdjust="spacingAndGlyphs">Boston</text>
<text class="lab2" x="1800.1" y="259.0" font-size="13" textLength="42.4" lengthAdjust="spacingAndGlyphs">Boston</text>
<text class="st" x="1730.1" y="296.8" font-size="10.5" textLength="89.2" lengthAdjust="spacingAndGlyphs">CONNECTICUT</text>
<text class="st2" x="1730.1" y="296.8" font-size="10.5" textLength="89.2" lengthAdjust="spacingAndGlyphs">CONNECTICUT</text>
<text class="lab" x="1702.2" y="321.6" font-size="15" textLength="64.6" lengthAdjust="spacingAndGlyphs">New York</text>
<text class="lab2" x="1702.2" y="321.6" font-size="15" textLength="64.6" lengthAdjust="spacingAndGlyphs">New York</text>
<text class="st" x="1688.1" y="354.9" font-size="10.5" textLength="73.7" lengthAdjust="spacingAndGlyphs">NEW JERSEY</text>
<text class="st2" x="1688.1" y="354.9" font-size="10.5" textLength="73.7" lengthAdjust="spacingAndGlyphs">NEW JERSEY</text>
<text class="lab" x="1633.6" y="231.8" font-size="13" textLength="66.6" lengthAdjust="spacingAndGlyphs">Syracuse</text>
<text class="lab2" x="1633.6" y="231.8" font-size="13" textLength="66.6" lengthAdjust="spacingAndGlyphs">Syracuse</text>
<text class="lab" x="771.8" y="239.9" font-size="13" textLength="41.6" lengthAdjust="spacingAndGlyphs">Casper</text>
<text class="lab2" x="771.8" y="239.9" font-size="13" textLength="41.6" lengthAdjust="spacingAndGlyphs">Casper</text>
<text class="lab" x="806.5" y="307.1" font-size="13" textLength="59.5" lengthAdjust="spacingAndGlyphs">Cheyenne</text>
<text class="lab2" x="806.5" y="307.1" font-size="13" textLength="59.5" lengthAdjust="spacingAndGlyphs">Cheyenne</text>
<text class="lab" x="807.8" y="359.6" font-size="15" textLength="48.2" lengthAdjust="spacingAndGlyphs">Denver</text>
<text class="lab2" x="807.8" y="359.6" font-size="15" textLength="48.2" lengthAdjust="spacingAndGlyphs">Denver</text>
<text class="lab" x="784.2" y="394.7" font-size="13" textLength="99.8" lengthAdjust="spacingAndGlyphs">Colorado Springs</text>
<text class="lab2" x="784.2" y="394.7" font-size="13" textLength="99.8" lengthAdjust="spacingAndGlyphs">Colorado Springs</text>
<text class="lab" x="777.7" y="509.8" font-size="13" textLength="52.0" lengthAdjust="spacingAndGlyphs">Santa Fe</text>
<text class="lab2" x="777.7" y="509.8" font-size="13" textLength="52.0" lengthAdjust="spacingAndGlyphs">Santa Fe</text>
<text class="st" x="763.1" y="562.0" font-size="10.5" textLength="76.6" lengthAdjust="spacingAndGlyphs">NEW MEXICO</text>
<text class="st2" x="763.1" y="562.0" font-size="10.5" textLength="76.6" lengthAdjust="spacingAndGlyphs">NEW MEXICO</text>
<text class="lab" x="765.7" y="648.5" font-size="13" textLength="44.0" lengthAdjust="spacingAndGlyphs">El Paso</text>
<text class="lab2" x="765.7" y="648.5" font-size="13" textLength="44.0" lengthAdjust="spacingAndGlyphs">El Paso</text>
<text class="lab" x="753.8" y="753.2" font-size="12.5" textLength="90.3" lengthAdjust="spacingAndGlyphs">Chihuahua City</text>
<text class="lab2" x="753.8" y="753.2" font-size="12.5" textLength="90.3" lengthAdjust="spacingAndGlyphs">Chihuahua City</text>
<text class="lab" x="735.7" y="879.2" font-size="12.5" textLength="51.1" lengthAdjust="spacingAndGlyphs">Culiacán</text>
<text class="lab2" x="735.7" y="879.2" font-size="12.5" textLength="51.1" lengthAdjust="spacingAndGlyphs">Culiacán</text>
</g>
<g id="L_black" fill="none" stroke="#000" stroke-width="3.8" stroke-linejoin="round" stroke-linecap="round" filter="url(#jag)">
<g transform="translate(1180 0) scale(0.18498)"><path vector-effect="non-scaling-stroke" d="M-270 -5 L-200 12 L-150 30 L-120 48 L-60 30 L-12 22 L25 40 L60 52 L85 80 L100 115 L125 95 L150 88 L180 120 L215 150 L260 145 L300 135 L340 110 L365 145 L420 150 L480 150 L500 175 L565 170" /></g>
<g transform="translate(1180 0) scale(0.18498)"><path vector-effect="non-scaling-stroke" d="M565 170 C550.8 175.8 507.5 193.3 480 205 C452.5 216.7 425.0 225.8 400 240 C375.0 254.2 348.3 275.0 330 290 C311.7 305.0 306.7 314.2 290 330 C273.3 345.8 253.3 363.3 230 385 C206.7 406.7 160.0 444.2 150 460 C140.0 475.8 153.3 480.8 170 480 C186.7 479.2 225.0 465.0 250 455 C275.0 445.0 304.2 428.3 320 420 C335.8 411.7 340.8 407.5 345 405" /></g>
<g transform="translate(1180 0) scale(0.18498)"><path vector-effect="non-scaling-stroke" d="M335 490 C346.7 491.7 382.5 502.5 405 500 C427.5 497.5 450.8 484.2 470 475 C489.2 465.8 498.3 454.2 520 445 C541.7 435.8 580.0 429.2 600 420 C620.0 410.8 623.3 403.3 640 390 C656.7 376.7 683.3 354.2 700 340 C716.7 325.8 725.0 313.3 740 305 C755.0 296.7 770.0 290.0 790 290 C810.0 290.0 858.3 299.2 860 305 C861.7 310.8 815.8 315.0 800 325 C784.2 335.0 776.7 350.8 765 365 C753.3 379.2 738.3 394.2 730 410 C721.7 425.8 710.0 458.3 715 460 C720.0 461.7 743.3 425.8 760 420 C776.7 414.2 799.2 418.3 815 425 C830.8 431.7 842.5 445.8 855 460 C867.5 474.2 874.2 500.0 890 510 C905.8 520.0 931.7 516.7 950 520 C968.3 523.3 981.7 534.2 1000 530 C1018.3 525.8 1040.0 504.2 1060 495 C1080.0 485.8 1096.7 479.5 1120 475 C1143.3 470.5 1174.2 471.3 1200 468 C1225.8 464.7 1264.2 448.8 1275 455 C1285.8 461.2 1259.2 492.5 1265 505 C1270.8 517.5 1295.0 527.5 1310 530 C1325.0 532.5 1340.0 522.5 1355 520 C1370.0 517.5 1391.7 504.2 1400 515 C1408.3 525.8 1400.0 568.3 1405 585 C1410.0 601.7 1414.2 608.3 1430 615 C1445.8 621.7 1490.0 618.8 1500 625 C1510.0 631.2 1506.7 649.5 1490 652 C1473.3 654.5 1426.7 642.0 1400 640 C1373.3 638.0 1341.7 640.0 1330 640" /></g>
<g transform="translate(1180 0) scale(0.18498)"><path vector-effect="non-scaling-stroke" d="M592 205 C592.8 200.0 595.3 195.8 610 185 C624.7 174.2 659.2 150.5 680 140 C700.8 129.5 728.3 120.3 735 122 C741.7 123.7 734.2 137.8 720 150 C705.8 162.2 669.2 184.2 650 195 C630.8 205.8 614.7 213.3 605 215 C595.3 216.7 591.2 210.0 592 205 Z" stroke-width="4.5" /></g>
<g transform="translate(1180 0) scale(0.18498)"><path vector-effect="non-scaling-stroke" d="M1330 640 C1316.7 636.7 1273.3 625.8 1250 620 C1226.7 614.2 1213.3 604.2 1190 605 C1166.7 605.8 1133.3 617.5 1110 625 C1086.7 632.5 1070.0 644.2 1050 650 C1030.0 655.8 1008.3 651.7 990 660 C971.7 668.3 955.0 680.0 940 700 C925.0 720.0 913.3 756.7 900 780 C886.7 803.3 874.2 821.3 860 840 C845.8 858.7 822.5 883.3 815 892" /></g>
<g transform="translate(1180 0) scale(0.18498)"><path vector-effect="non-scaling-stroke" d="M1010 655 C1005.8 665.8 998.3 695.8 985 720 C971.7 744.2 947.5 771.3 930 800 C912.5 828.7 888.3 876.7 880 892" stroke-width="5" /></g>
<g transform="translate(1180 0) scale(0.18498)"><path vector-effect="non-scaling-stroke" d="M1030 690 C1020.0 708.3 987.5 766.3 970 800 C952.5 833.7 932.5 876.7 925 892" stroke-width="4.5" /></g>
<g transform="translate(1180 0) scale(0.18498)"><path vector-effect="non-scaling-stroke" d="M1330 650 C1323.3 656.7 1303.3 678.3 1290 690 C1276.7 701.7 1251.7 706.7 1250 720 C1248.3 733.3 1283.3 758.3 1280 770 C1276.7 781.7 1240.8 778.3 1230 790 C1219.2 801.7 1220.0 823.0 1215 840 C1210.0 857.0 1202.5 883.3 1200 892" /></g>
<g transform="translate(1180 0) scale(0.18498)"><path vector-effect="non-scaling-stroke" d="M1330 650 C1341.7 661.7 1376.7 701.7 1400 720 C1423.3 738.3 1448.3 746.7 1470 760 C1491.7 773.3 1517.5 783.3 1530 800 C1542.5 816.7 1546.7 844.7 1545 860 C1543.3 875.3 1524.2 886.7 1520 892" /></g>
<g transform="translate(1180 0) scale(0.18498)"><path vector-effect="non-scaling-stroke" d="M1440 615 C1445.0 612.5 1458.3 597.5 1470 600 C1481.7 602.5 1506.7 621.7 1510 630 C1513.3 638.3 1493.3 646.7 1490 650" stroke-width="4" /></g>
<g transform="translate(1640 0) scale(0.18498)"><path vector-effect="non-scaling-stroke" d="M1262 300 L1225 350 L1190 400 L1150 470 L1140 530 L1112 580 L1100 650 L1062 700 L1032 740 L1040 780 L1002 800 L982 780 L942 790 L916 810 L915 840" /></g>
<g transform="translate(1680 150) scale(0.20186)"><path vector-effect="non-scaling-stroke" d="M1189 130 C1179.2 138.3 1148.2 166.7 1130 180 C1111.8 193.3 1101.7 202.5 1080 210 C1058.3 217.5 1021.7 215.0 1000 225 C978.3 235.0 970.0 258.3 950 270 C930.0 281.7 900.0 286.7 880 295 C860.0 303.3 845.0 309.2 830 320 C815.0 330.8 800.0 346.7 790 360 C780.0 373.3 778.3 386.7 770 400 C761.7 413.3 745.8 425.0 740 440 C734.2 455.0 731.7 476.7 735 490 C738.3 503.3 762.5 508.3 760 520 C757.5 531.7 729.2 549.7 720 560 C710.8 570.3 701.7 575.3 705 582 C708.3 588.7 730.8 588.7 740 600 C749.2 611.3 751.7 635.0 760 650 C768.3 665.0 788.3 680.8 790 690 C791.7 699.2 785.0 700.0 770 705 C755.0 710.0 718.3 720.8 700 720 C681.7 719.2 670.0 696.7 660 700 C650.0 703.3 656.7 728.3 640 740 C623.3 751.7 595.0 762.5 560 770 C525.0 777.5 465.0 776.7 430 785 C395.0 793.3 371.7 809.2 350 820 C328.3 830.8 312.5 840.0 300 850 C287.5 860.0 279.2 875.0 275 880" /></g>
<g transform="translate(1680 300) scale(0.20186)"><path vector-effect="non-scaling-stroke" d="M265 150 C267.8 158.3 280.8 173.3 282 200 C283.2 226.7 277.3 283.3 272 310 C266.7 336.7 262.0 341.7 250 360 C238.0 378.3 215.0 401.7 200 420 C185.0 438.3 171.7 458.8 160 470 C148.3 481.2 137.5 487.0 130 487 C122.5 487.0 120.0 477.8 115 470 C110.0 462.2 107.5 446.7 100 440 C92.5 433.3 73.7 423.3 70 430 C66.3 436.7 69.7 466.7 78 480 C86.3 493.3 112.2 495.0 120 510 C127.8 525.0 128.3 550.0 125 570 C121.7 590.0 109.2 611.7 100 630 C90.8 648.3 79.7 668.3 70 680 C60.3 691.7 47.8 686.7 42 700 C36.2 713.3 36.7 746.7 35 760 C33.3 773.3 32.5 776.7 32 780" /></g>
<g transform="translate(1680 150) scale(0.20186)"><path vector-effect="non-scaling-stroke" d="M790 690 C800.0 691.3 837.0 701.3 850 698 C863.0 694.7 867.7 679.7 868 670 C868.3 660.3 858.7 647.3 852 640 C845.3 632.7 834.7 626.0 828 626 C821.3 626.0 814.7 637.7 812 640" stroke-width="4.5" /></g>
<g transform="translate(1680 150) scale(0.20186)"><path vector-effect="non-scaling-stroke" d="M700 720 C710.0 716.7 733.3 705.0 760 700 C786.7 695.0 843.3 691.7 860 690" stroke-width="4" /></g>
<g transform="translate(1680 150) scale(0.20186)"><path vector-effect="non-scaling-stroke" d="M290 862 C300.0 856.7 326.7 840.3 350 830 C373.3 819.7 401.7 806.7 430 800 C458.3 793.3 491.7 794.2 520 790 C548.3 785.8 578.3 780.8 600 775 C621.7 769.2 641.7 758.3 650 755" stroke-width="5" /></g>
<g transform="translate(1680 150) scale(0.20186)"><path vector-effect="non-scaling-stroke" d="M300 880 C316.7 878.0 370.0 874.3 400 868 C430.0 861.7 453.3 850.8 480 842 C506.7 833.2 542.5 818.7 560 815 C577.5 811.3 580.8 819.2 585 820" stroke-width="4" /></g>
<g transform="translate(1680 300) scale(0.20186)"><path vector-effect="non-scaling-stroke" d="M240 185 C253.3 183.3 290.0 180.8 320 175 C350.0 169.2 386.7 160.8 420 150 C453.3 139.2 492.5 120.8 520 110 C547.5 99.2 574.2 89.2 585 85" stroke-width="4" /></g>
<g transform="translate(1680 150) scale(0.20186)"><path vector-effect="non-scaling-stroke" d="M1189 140 C1179.2 148.3 1148.2 177.0 1130 190 C1111.8 203.0 1101.7 210.5 1080 218 C1058.3 225.5 1020.0 225.5 1000 235 C980.0 244.5 966.7 268.3 960 275" stroke-width="6" /></g>
<g transform="translate(1680 300) scale(0.20186)"><path vector-effect="non-scaling-stroke" d="M38 340 C39.2 345.3 42.7 362.8 45 372 C47.3 381.2 50.8 391.2 52 395" stroke-width="7" /></g>
<g transform="translate(1680 440) scale(0.20169)"><path vector-effect="non-scaling-stroke" d="M35 -5 C36.8 0.8 45.8 17.2 46 30 C46.2 42.8 37.7 65.0 36 72" stroke-width="4" /></g>
<g transform="translate(1680 440) scale(0.20169)"><path vector-effect="non-scaling-stroke" d="M35 310 L65 392 L60 465 L35 468" stroke-width="4" /></g>
<g transform="translate(695 640) scale(0.18498)"><path vector-effect="non-scaling-stroke" d="M495 75 L520 95 L545 130 L580 150 L640 205 L665 245 L700 255 L740 290 L760 330 L780 360 L785 420 L815 480" /></g>
</g>
<g id="L_blackfill" fill="#000" stroke="none" filter="url(#jag)">
<g transform="translate(1180 0) scale(0.18498)"><path vector-effect="non-scaling-stroke" d="M322 405 L352 395 L372 385 L395 388 L425 380 L418 412 L400 430 L380 445 L362 455 L350 470 L345 498 L322 500 L335 465 L340 430 Z"/></g>
<g transform="translate(1180 0) scale(0.18498)"><path vector-effect="non-scaling-stroke" d="M1300 620 C1306.7 609.2 1336.7 618.3 1350 625 C1363.3 631.7 1380.0 647.5 1380 660 C1380.0 672.5 1361.7 695.0 1350 700 C1338.3 705.0 1318.3 703.3 1310 690 C1301.7 676.7 1293.3 630.8 1300 620 Z"/></g>
<g transform="translate(1180 0) scale(0.18498)"><ellipse cx="1185" cy="690" rx="32" ry="24" transform="rotate(0 1185 690)"/></g>
<g transform="translate(1180 0) scale(0.18498)"><ellipse cx="1130" cy="755" rx="22" ry="12" transform="rotate(0 1130 755)"/></g>
<g transform="translate(1180 0) scale(0.18498)"><ellipse cx="1110" cy="830" rx="18" ry="16" transform="rotate(0 1110 830)"/></g>
<g transform="translate(1180 0) scale(0.18498)"><ellipse cx="1170" cy="840" rx="25" ry="25" transform="rotate(0 1170 840)"/></g>
<g transform="translate(1180 0) scale(0.18498)"><ellipse cx="1140" cy="870" rx="30" ry="18" transform="rotate(0 1140 870)"/></g>
<g transform="translate(1180 0) scale(0.18498)"><ellipse cx="1385" cy="590" rx="15" ry="10" transform="rotate(0 1385 590)"/></g>
<g transform="translate(1680 150) scale(0.20186)"><ellipse cx="655" cy="710" rx="28" ry="30" transform="rotate(0 655 710)"/></g>
<g transform="translate(1680 150) scale(0.20186)"><ellipse cx="740" cy="775" rx="22" ry="14" transform="rotate(0 740 775)"/></g>
<g transform="translate(1680 150) scale(0.20186)"><ellipse cx="760" cy="740" rx="30" ry="14" transform="rotate(0 760 740)"/></g>
<g transform="translate(1680 150) scale(0.20186)"><ellipse cx="840" cy="778" rx="26" ry="12" transform="rotate(0 840 778)"/></g>
<g transform="translate(1680 150) scale(0.20186)"><ellipse cx="622" cy="800" rx="10" ry="10" transform="rotate(0 622 800)"/></g>
<g transform="translate(1680 150) scale(0.20186)"><ellipse cx="1010" cy="275" rx="10" ry="10" transform="rotate(0 1010 275)"/></g>
<g transform="translate(1680 150) scale(0.20186)"><ellipse cx="950" cy="295" rx="10" ry="8" transform="rotate(0 950 295)"/></g>
</g>
<g id="L_blacks" fill="none" stroke="#000" stroke-width="3.8" stroke-linejoin="miter" stroke-linecap="round">
<g transform="translate(1640 0) scale(0.18498)"><path vector-effect="non-scaling-stroke" d="M915 835 L915 855 L380 855 L340 870 L295 900" /></g>
<g transform="translate(1640 0) scale(0.18498)"><path vector-effect="non-scaling-stroke" d="M1455 335 L1495 375 L1498 560 L1490 690 L1520 715" /></g>
<g transform="translate(695 640) scale(0.18498)"><path vector-effect="non-scaling-stroke" d="M-20 157 L228 157 L228 75 L497 75" /></g>
</g>
<!--/MAPSVG-->
</svg>
</div>

<!-- ================= SIDEBAR ================= -->
<div id="sidebar">
<svg class="abs" style="left:0;top:0" width="270" height="125" viewBox="0 0 270 125">
 <g transform="translate(40 20) scale(0.0785)">
  <path d="M12 778 H2000 V796 H12 Z" fill="#ffd955"/>
  <path d="M10 776 H230 V798 L30 802 Q5 800 10 776 Z" fill="#ffcb05"/>
  <g fill="#1a4b8f">
   <path d="M90 112 H205 L318 545 L410 112 H520 L535 762 H450 L442 300 L345 745 L340 762 H275 L178 310 L175 762 H88 Z"/>
   <path d="M722 112 H850 L972 762 H868 L838 612 H728 L700 762 H598 Z"/>
   <path d="M1035 112 H1210 V190 H1158 V390 H1210 V470 H1158 V762 H1035 Z"/>
   <path d="M1225 112 H1255 Q1400 112 1400 290 Q1400 470 1255 470 H1225 V390 Q1285 390 1285 290 Q1285 190 1225 190 Z"/>
  </g>
  <path d="M783 235 L828 535 H740 Z" fill="#fff"/>
  <rect x="622" y="548" width="326" height="27" fill="#fff"/>
  <rect x="622" y="553" width="326" height="17" fill="#d5deea"/>
 </g>
 <g transform="translate(145 20) scale(0.0785)">
  <g fill="#ffcb05">
   <path d="M125 300 Q125 112 310 112 Q495 112 495 300 V580 Q495 765 310 765 Q125 765 125 580 Z"/>
   <path d="M548 300 Q548 112 725 112 Q895 112 895 300 V330 H790 V290 Q790 200 725 200 Q660 200 660 290 V590 Q660 680 725 680 Q790 680 790 590 V500 H725 V432 H895 V758 H822 L805 700 Q780 765 715 765 Q548 765 548 580 Z"/>
   <path d="M725 776 H975 Q970 800 940 802 L725 800 Z"/>
  </g>
  <g fill="#fff">
   <path d="M240 290 Q240 200 310 200 Q380 200 380 290 V590 Q380 680 310 680 Q240 680 240 590 Z"/>
   <rect x="303" y="100" width="17" height="110"/>
   <rect x="303" y="670" width="17" height="105"/>
   <rect x="714" y="100" width="15" height="110"/>
   <rect x="714" y="670" width="15" height="105"/>
  </g>
  <path d="M308 420 C360 420 396 460 396 508 C396 570 340 615 308 662 C276 615 221 570 221 508 C221 460 257 420 308 420 Z" fill="#1a4b8f"/>
  <circle cx="308" cy="506" r="31" fill="#ffcb05"/>
  <circle cx="308" cy="506" r="17" fill="#ffe27a"/>
 </g>
</svg>
<div class="divider"></div>

<div class="nav active" style="top:144px"><span class="lbl" style="transform:scaleX(0.92);transform-origin:0 50%">Story Overview</span></div>
<div class="nav" style="top:201px"><span class="lbl" style="transform:scaleX(0.939);transform-origin:0 50%">Add Story</span></div>
<div class="nav" style="top:258px"><span class="lbl" style="transform:scaleX(0.952);transform-origin:0 50%">Add/Upload Data</span></div>
<div class="nav" style="top:315px"><span class="lbl" style="transform:scaleX(0.9375);transform-origin:0 50%;top:18px">Process Data</span></div>
<div class="nav" style="top:372px"><span class="lbl" style="transform:scaleX(0.944);transform-origin:0 50%;top:18px">Base Map</span></div>
<div class="nav" style="top:429px"><span class="lbl" style="transform:scaleX(0.906);transform-origin:0 50%;top:18px">Preview &amp; Share</span></div>
<div class="nav" style="top:487px"><span class="lbl" style="transform:scaleX(0.897);transform-origin:0 50%">GIS Data</span></div>

<!-- nav icons (absolute page coords) -->
<svg class="abs" style="left:0;top:140px" width="80" height="400" viewBox="0 140 80 400" fill="none" stroke="#6b7385" stroke-width="1.7" stroke-linecap="round" stroke-linejoin="round">
 <!-- story overview (filled map) -->
 <path d="M31.6 161.6 L38.6 159.4 V178.4 L31.6 180.4 Z M39.8 159.6 L46.2 161.8 V180.4 L39.8 178.4 Z M47.4 161.8 L54.4 159.8 V178.6 L47.4 180.6 Z" fill="#6b7385" stroke="none"/>
 <!-- add story pin -->
 <path d="M43.1 215.6 C48.2 215.6 52.2 219.5 52.2 224.6 C52.2 230 46.5 234.5 43.1 237.6 C39.7 234.5 34 230 34 224.6 C34 219.5 38 215.6 43.1 215.6 Z"/>
 <circle cx="43.1" cy="224.4" r="3.2"/>
 <path d="M34.6 238.6 H51.6"/>
 <!-- upload file -->
 <path d="M35.4 273.6 H46 L52 279.6 V293.4 Q52 295.2 50.2 295.2 H36 Q34.2 295.2 34.2 293.4 V275 Q34.2 273.6 35.4 273.6 Z M46 273.8 V279.6 H51.8"/>
 <path d="M43.1 291 V283 M40 286 L43.1 282.8 L46.2 286" stroke-width="1.5"/>
 <!-- process data -->
 <path d="M43.5 354.6 H33 Q29.8 354.6 29.8 351.4 V338.2 Q29.8 335 33 335 H49 Q52.2 335 52.2 338.2 V340.6 M29.8 341.6 H44 M34.8 335 V332.4 Q34.8 329 38.2 329 H44 L48 333 V335 M43.8 329.2 V333 H47.6"/>
 <circle cx="49.6" cy="348.4" r="3.4"/>
 <path d="M49.6 342.4 V344 M49.6 352.8 V354.4 M43.6 348.4 H45.2 M54 348.4 H55.6 M45.4 344.2 L46.5 345.3 M52.7 351.5 L53.8 352.6 M53.8 344.2 L52.7 345.3 M46.5 351.5 L45.4 352.6" stroke-width="1.6"/>
 <!-- base map -->
 <path d="M44 388 H35.4 Q31.8 388 31.8 391.6 V406.4 Q31.8 410 35.4 410 H51 Q54.6 410 54.6 406.4 V401.6 M40.2 388.2 V397.4 L31.8 401.4 M40.2 397.4 L46.8 402.8 L42.4 410 M46.8 402.8 H54.4"/>
 <path d="M50.2 387.4 C53 387.4 55 389.4 55 392 C55 395 52 397.4 50.2 399.2 C48.4 397.4 45.4 395 45.4 392 C45.4 389.4 47.4 387.4 50.2 387.4 Z"/>
 <circle cx="50.2" cy="392" r="1" fill="#6b7385"/>
 <!-- preview & share -->
 <path d="M42 465.6 H34.6 Q32.4 465.6 32.4 463.4 V447.8 Q32.4 445.6 34.6 445.6 H51.6 Q53.8 445.6 53.8 447.8 V457.4"/>
 <path d="M40.6 450.4 H49.6 M40.6 455 H49.6 M40.6 459.6 H45"/>
 <circle cx="36.8" cy="450.4" r=".9" fill="#6b7385"/><circle cx="36.8" cy="455" r=".9" fill="#6b7385"/><circle cx="36.8" cy="459.6" r=".9" fill="#6b7385"/>
 <path d="M49.6 459.4 L54.6 463.2 L49.6 467 V464.8 Q45.4 464.6 43.4 467.6 Q44 462 49.6 461.6 Z" fill="#6b7385" stroke-width="1"/>
 <!-- gis data -->
 <path d="M36.4 510.6 L32.6 513.2 Q31.4 514.2 31.4 515.6 V522.4 Q31.4 525.8 34.8 525.8 H51.4 Q54.8 525.8 54.8 522.4 V515.6 Q54.8 514.2 53.6 513.2 L49.8 510.6 M31.6 514.6 L43.1 521 L54.6 514.6 M40 519.4 L33 525.4 M46.2 519.4 L53.2 525.4"/>
 <path d="M43.1 502 C46.4 502 48.8 504.4 48.8 507.6 C48.8 511 45.4 513.8 43.1 516 C40.8 513.8 37.4 511 37.4 507.6 C37.4 504.4 39.8 502 43.1 502 Z"/>
 <circle cx="43.1" cy="507.4" r="1.3" fill="#6b7385"/>
</svg>

<!-- notifications -->
<svg class="abs" style="left:30px;top:752px" width="36" height="36" viewBox="0 0 36 36" fill="none" stroke="#1f2a2e" stroke-width="1.5" stroke-linecap="round" stroke-linejoin="round">
 <path d="M8 24.4 H22 Q22.8 24.4 22.4 23.6 Q20.8 21 20.8 17.4 V15.6 Q20.8 10.4 15 10.4 Q9.2 10.4 9.2 15.6 V17.4 Q9.2 21 7.6 23.6 Q7.2 24.4 8 24.4 Z"/>
 <path d="M12.6 25 Q12.8 27.4 15 27.4 Q17.2 27.4 17.4 25"/>
 <circle cx="24.4" cy="9.4" r="2.4" fill="#e0061a" stroke="none"/>
</svg>
<span class="t" style="left:74px;top:763px;font-size:19px;letter-spacing:.2px;color:#0d0d0d">Notifications</span>
<div class="abs" style="left:29px;top:816px;width:31px;height:31px;border-radius:50%;background:#1a4b8f;box-shadow:0 5px 12px rgba(0,0,0,.42)"></div>
<span class="t" style="left:38.5px;top:823px;font-size:17px;color:#fff">A</span>
<span class="t" style="left:71px;top:822px;font-size:19px;letter-spacing:-.45px;color:#0d0d0d">Ashay</span>

<div id="collapse"><svg width="22" height="46" viewBox="0 0 22 46"><path d="M14.5 16 L7.5 23 L14.5 30" fill="none" stroke="#1a4b8f" stroke-width="1.6" stroke-linecap="round" stroke-linejoin="round"/></svg></div>
</div>

<!-- ================= GIS PANEL ================= -->
<div id="panel">
<span class="t" style="left:35px;top:23px;font-size:24px;font-weight:400;-webkit-text-stroke:.7px #1a4b8f;letter-spacing:-.9px;color:#1a4b8f">GIS Data</span>
<svg class="abs" style="left:400px;top:8px" width="18" height="18" viewBox="0 0 18 18"><path d="M2.6 2.2 L15.4 15.2 M15.4 2.2 L2.6 15.2" stroke="#000" stroke-width="2" fill="none"/></svg>
<div id="tut"></div>
<span class="t" style="left:19px;top:87px;font-size:17px;letter-spacing:-.32px;color:#1a4b8f">Watch video tutorial for GIS Data tool</span>
<svg class="abs" style="left:383px;top:80px" width="28" height="28" viewBox="0 0 28 28">
 <rect x="2" y="2" width="23" height="17" rx="4.5" fill="#dc0000"/>
 <path d="M11 6.6 L17 10.5 L11 14.4 Z" fill="none" stroke="#fff" stroke-width="1.5" stroke-linejoin="round"/>
 <path d="M2.4 22.6 H6 M14 22.6 H25" stroke="#dc0000" stroke-width="1.7"/>
 <circle cx="9.6" cy="22.6" r="1.9" fill="#dc0000"/>
</svg>
<div id="pbody"></div>
<div id="search">
 <div class="ul"></div>
 <span class="t" style="left:19px;top:17px;font-size:20px;letter-spacing:-.36px;color:#000;width:292px;overflow:hidden;display:block">Stadium in united states of america</span>
 <div class="btn"><svg width="57" height="56" viewBox="0 0 57 56"><circle cx="26.6" cy="26" r="10.6" fill="none" stroke="#fff" stroke-width="2.3"/><path d="M34.4 33.8 L41.6 41" stroke="#fff" stroke-width="2.3" stroke-linecap="round"/></svg></div>
</div>
<span class="t" style="left:129px;top:243px;font-size:19px;letter-spacing:-.45px;color:#1a4b8f;text-decoration:underline;text-decoration-thickness:1.5px;text-underline-offset:2px">&lt; Back to Layer Data</span>
<div id="vtrack"></div>
<div id="vsb"></div>
<div class="abs" style="left:0;top:889px;width:427px;height:3px;background:#eeeeee"></div>

</div>

<!-- ================= DATA PANEL ================= -->
<div id="dp">
<div id="dptop"></div>
<div id="dph"><div id="dphi">
 <span class="t" style="left:17px;top:23px;font-size:18px;letter-spacing:.08px;color:#111">View Filtered Layer Data as:</span>
 <svg class="abs" style="left:15px;top:58px" width="150" height="28" viewBox="0 0 150 28">
  <circle cx="13.5" cy="13.5" r="10.2" fill="none" stroke="#5a5a5a" stroke-width="2"/>
  <circle cx="132.5" cy="13.5" r="10.2" fill="none" stroke="#1b4f9c" stroke-width="2"/>
  <circle cx="132.5" cy="13.5" r="5.3" fill="#1b4f9c"/>
 </svg>
 <span class="t" style="left:47px;top:69px;font-size:16px;transform:scaleX(.88);transform-origin:0 50%;color:#111">POINT</span>
 <span class="t" style="left:99px;top:61px;font-size:15px;font-weight:700;letter-spacing:.4px;color:#1b4f9c">302</span>
 <span class="t" style="left:165px;top:69px;font-size:15.5px;font-weight:700;transform:scaleX(.868);transform-origin:0 50%;color:#1b4f9c">POLYGON</span>
 <span class="t" style="left:242px;top:61px;font-size:15px;font-weight:700;letter-spacing:.2px;color:#1b4f9c">6053</span>
 <svg class="abs" style="left:750px;top:8px" width="92" height="28" viewBox="0 0 92 28" fill="none" stroke="#000">
  <path d="M6 13 H21" stroke-width="2.2"/>
  <path d="M44.6 5 H59.4 V20.6" stroke-width="1" stroke="#333"/><rect x="42.6" y="6.8" width="15" height="15" stroke-width="1.2" stroke="#222" fill="#f3f4f9"/>
  <path d="M70 5.2 L86.4 21.4 M86.4 5.2 L70 21.4" stroke-width="2.5"/>
 </svg>
</div></div>
<div id="grid">
 <div id="ghead"></div>
 <div class="hl" style="top:57px;width:820px"></div>
 <div class="hl" style="top:113px;width:841px"></div>
 <span class="hc" style="left:18px">leisure</span>
 <span class="hc" style="left:194px">name</span>
 <span class="hc" style="left:369px">shape0</span>
 <span class="hc" style="left:545px">shape1</span>
 <span class="hc" style="left:720px">sl</span>
 <div class="sep" style="left:172px"></div><div class="sep" style="left:347px"></div><div class="sep" style="left:523px"></div><div class="sep" style="left:698px"></div>
 <div class="fi" style="left:18px"></div><div class="fi" style="left:194px"></div><div class="fi" style="left:369px"></div><div class="fi" style="left:545px"></div><div class="fi" style="left:720px"></div>
 <svg class="fic" style="left:138px" width="20" height="16" viewBox="0 0 20 16"><path d="M1.6 3.4 H18 M4.8 8 H14.8 M7.4 12.6 H12.2" stroke="#222" stroke-width="1.6"/></svg>
 <svg class="fic" style="left:313px" width="20" height="16" viewBox="0 0 20 16"><path d="M1.6 3.4 H18 M4.8 8 H14.8 M7.4 12.6 H12.2" stroke="#222" stroke-width="1.6"/></svg>
 <svg class="fic" style="left:489px" width="20" height="16" viewBox="0 0 20 16"><path d="M1.6 3.4 H18 M4.8 8 H14.8 M7.4 12.6 H12.2" stroke="#222" stroke-width="1.6"/></svg>
 <svg class="fic" style="left:664px" width="20" height="16" viewBox="0 0 20 16"><path d="M1.6 3.4 H18 M4.8 8 H14.8 M7.4 12.6 H12.2" stroke="#222" stroke-width="1.6"/></svg>
<div class="row" style="top:114px;height:49px"><span class="c1">stadium</span><span class="c2">Scott O'Leary Sta...</span><span class="c3">united_states_of_...</span><span class="c4">California</span><span class="c5">S.</span></div>
<div class="row" style="top:163px;height:49px"><span class="c1">stadium</span><span class="c2">Caesar Uyesaka S...</span><span class="c3">united_states_of_...</span><span class="c4">California</span><span class="c5">S.</span></div>
<div class="row" style="top:212px;height:49px"><span class="c1">stadium</span><span class="c2">Softball Stadium</span><span class="c3">united_states_of_...</span><span class="c4">California</span><span class="c5">S.</span></div>
<div class="row" style="top:261px;height:49px"><span class="c1">stadium</span><span class="c2">Pauley Track</span><span class="c3">united_states_of_...</span><span class="c4">California</span><span class="c5">S.</span></div>
<div class="row" style="top:310px;height:49px"><span class="c1">stadium</span><span class="c2">Harder Stadium</span><span class="c3">united_states_of_...</span><span class="c4">California</span><span class="c5">S.</span></div>
<div class="row" style="top:359px;height:49px"><span class="c1">stadium</span><span class="c2">Santa Maria Race...</span><span class="c3">united_states_of_...</span><span class="c4">California</span><span class="c5">S.</span></div>
<div class="row" style="top:408px;height:50px"><span class="c1">stadium</span><span class="c2"></span><span class="c3">united_states_of_...</span><span class="c4">California</span><span class="c5">S.</span></div>
<div class="row" style="top:458px;height:49px"><span class="c1">stadium</span><span class="c2"></span><span class="c3">united_states_of_...</span><span class="c4">California</span><span class="c5">S.</span></div>
<div class="row" style="top:507px;height:49px"><span class="c1">stadium</span><span class="c2"></span><span class="c3">united_states_of_...</span><span class="c4">California</span><span class="c5">S.</span></div>
<div id="pin"><div class="abs" style="left:0;top:0;width:110px;height:113px;background:#f9f9f9"></div><div class="abs" style="left:0;top:114px;width:110px;height:437px;background:#fff"></div><div class="abs" style="left:88px;top:114px;width:22px;height:437px;background:#fafafa"></div><div class="hl" style="top:57px;width:88px"></div><div class="hl" style="top:113px;width:110px"></div><div class="sep" style="left:3px"></div><span class="hc" style="left:19px;letter-spacing:.15px">Action</span><svg class="mag" style="top:120.5px" width="40" height="30" viewBox="0 0 40 30" fill="none" stroke="#0a0a0a"><ellipse cx="13" cy="10" rx="10.3" ry="7.7" stroke-width="1.7"/><path d="M8.4 10 H17.6 M13 6.6 V13.4" stroke-width="1.6"/><path d="M19.6 15.6 L30.6 22.6" stroke-width="3.6" stroke-linecap="round"/><path d="M21.4 16.8 L30.2 22.4" stroke="#fff" stroke-width="1.2" stroke-linecap="round"/></svg><div class="hl" style="top:162px;width:88px;background:#dedede"></div><svg class="mag" style="top:169.5px" width="40" height="30" viewBox="0 0 40 30" fill="none" stroke="#0a0a0a"><ellipse cx="13" cy="10" rx="10.3" ry="7.7" stroke-width="1.7"/><path d="M8.4 10 H17.6 M13 6.6 V13.4" stroke-width="1.6"/><path d="M19.6 15.6 L30.6 22.6" stroke-width="3.6" stroke-linecap="round"/><path d="M21.4 16.8 L30.2 22.4" stroke="#fff" stroke-width="1.2" stroke-linecap="round"/></svg><div class="hl" style="top:211px;width:88px;background:#dedede"></div><svg class="mag" style="top:218.5px" width="40" height="30" viewBox="0 0 40 30" fill="none" stroke="#0a0a0a"><ellipse cx="13" cy="10" rx="10.3" ry="7.7" stroke-width="1.7"/><path d="M8.4 10 H17.6 M13 6.6 V13.4" stroke-width="1.6"/><path d="M19.6 15.6 L30.6 22.6" stroke-width="3.6" stroke-linecap="round"/><path d="M21.4 16.8 L30.2 22.4" stroke="#fff" stroke-width="1.2" stroke-linecap="round"/></svg><div class="hl" style="top:260px;width:88px;background:#dedede"></div><svg class="mag" style="top:267.5px" width="40" height="30" viewBox="0 0 40 30" fill="none" stroke="#0a0a0a"><ellipse cx="13" cy="10" rx="10.3" ry="7.7" stroke-width="1.7"/><path d="M8.4 10 H17.6 M13 6.6 V13.4" stroke-width="1.6"/><path d="M19.6 15.6 L30.6 22.6" stroke-width="3.6" stroke-linecap="round"/><path d="M21.4 16.8 L30.2 22.4" stroke="#fff" stroke-width="1.2" stroke-linecap="round"/></svg><div class="hl" style="top:309px;width:88px;background:#dedede"></div><svg class="mag" style="top:316.5px" width="40" height="30" viewBox="0 0 40 30" fill="none" stroke="#0a0a0a"><ellipse cx="13" cy="10" rx="10.3" ry="7.7" stroke-width="1.7"/><path d="M8.4 10 H17.6 M13 6.6 V13.4" stroke-width="1.6"/><path d="M19.6 15.6 L30.6 22.6" stroke-width="3.6" stroke-linecap="round"/><path d="M21.4 16.8 L30.2 22.4" stroke="#fff" stroke-width="1.2" stroke-linecap="round"/></svg><div class="hl" style="top:358px;width:88px;background:#dedede"></div><svg class="mag" style="top:365.5px" width="40" height="30" viewBox="0 0 40 30" fill="none" stroke="#0a0a0a"><ellipse cx="13" cy="10" rx="10.3" ry="7.7" stroke-width="1.7"/><path d="M8.4 10 H17.6 M13 6.6 V13.4" stroke-width="1.6"/><path d="M19.6 15.6 L30.6 22.6" stroke-width="3.6" stroke-linecap="round"/><path d="M21.4 16.8 L30.2 22.4" stroke="#fff" stroke-width="1.2" stroke-linecap="round"/></svg><div class="hl" style="top:407px;width:88px;background:#dedede"></div><svg class="mag" style="top:414.5px" width="40" height="30" viewBox="0 0 40 30" fill="none" stroke="#0a0a0a"><ellipse cx="13" cy="10" rx="10.3" ry="7.7" stroke-width="1.7"/><path d="M8.4 10 H17.6 M13 6.6 V13.4" stroke-width="1.6"/><path d="M19.6 15.6 L30.6 22.6" stroke-width="3.6" stroke-linecap="round"/><path d="M21.4 16.8 L30.2 22.4" stroke="#fff" stroke-width="1.2" stroke-linecap="round"/></svg><div class="hl" style="top:457px;width:88px;background:#dedede"></div><svg class="mag" style="top:464.5px" width="40" height="30" viewBox="0 0 40 30" fill="none" stroke="#0a0a0a"><ellipse cx="13" cy="10" rx="10.3" ry="7.7" stroke-width="1.7"/><path d="M8.4 10 H17.6 M13 6.6 V13.4" stroke-width="1.6"/><path d="M19.6 15.6 L30.6 22.6" stroke-width="3.6" stroke-linecap="round"/><path d="M21.4 16.8 L30.2 22.4" stroke="#fff" stroke-width="1.2" stroke-linecap="round"/></svg><div class="hl" style="top:506px;width:88px;background:#dedede"></div><svg class="mag" style="top:513.5px" width="40" height="30" viewBox="0 0 40 30" fill="none" stroke="#0a0a0a"><ellipse cx="13" cy="10" rx="10.3" ry="7.7" stroke-width="1.7"/><path d="M8.4 10 H17.6 M13 6.6 V13.4" stroke-width="1.6"/><path d="M19.6 15.6 L30.6 22.6" stroke-width="3.6" stroke-linecap="round"/><path d="M21.4 16.8 L30.2 22.4" stroke="#fff" stroke-width="1.2" stroke-linecap="round"/></svg><div class="hl" style="top:555px;width:88px;background:#dedede"></div></div><div class="abs" style="left:0;top:527px;width:841px;height:24px;background:linear-gradient(#fcfcfc,#f9f9f9 70%,#f1f1f1)"></div>
<div class="abs" style="left:730px;top:527px;width:1px;height:23px;background:#d4d4d4"></div>
<svg class="abs" style="left:0;top:527px" width="841" height="24" viewBox="846 800 841 24" fill="#8b8b8b" stroke="#8b8b8b" stroke-width="2" stroke-linejoin="round">
 <rect x="872" y="805.4" width="564" height="11.4" rx="5.7" stroke="none"/>
 <path d="M862 806.2 V816.8 L854.2 811.5 Z"/>
 <path d="M1560.4 806.2 V816.8 L1568.2 811.5 Z"/>
 <path d="M1593 806.2 V816.8 L1585.2 811.5 Z"/>
 <path d="M1670.4 806.2 V816.8 L1678.2 811.5 Z"/>
</svg>
<svg class="abs" style="left:818px;top:114px" width="23" height="413" viewBox="1664 387 23 413" fill="#8b8b8b" stroke="#8b8b8b" stroke-width="2" stroke-linejoin="round">
 <path d="M1669.6 403.2 H1680.6 L1675.1 395.6 Z"/>
 <rect x="1669.2" y="413.2" width="11.8" height="23.4" rx="5.9" stroke="none"/>
 <path d="M1669.6 784.4 H1680.6 L1675.1 792.2 Z"/>
</svg>

</div>
<div id="foot">
 <span class="t" style="left:17px;top:35px;font-size:17px;letter-spacing:-.48px">Items per Page: 200</span>
 <span class="t" style="left:557px;top:25px;font-size:17px;font-weight:700;letter-spacing:-.63px">1 - 200 of</span>
 <span class="t" style="left:546px;top:45px;font-size:17px;font-weight:700;letter-spacing:-.75px">6053 entries</span>
 <span class="t" style="left:676px;top:35px;font-size:15px;font-weight:700;letter-spacing:-.6px;color:#8fb0dc">PREV</span>
 <span class="t" style="left:735px;top:35px;font-size:17px">1</span>
 <span class="t" style="left:765px;top:35px;font-size:15px;font-weight:700;letter-spacing:-.4px">NEXT</span>
</div>

</div>

<!-- ================= MAP CONTROLS ================= -->
<div class="abs" style="left:1675px;top:26px;width:59px;height:53px;background:#fff;border-radius:11px"></div>
<svg class="abs" style="left:1688px;top:36px" width="34" height="34" viewBox="0 0 34 34">
 <defs><linearGradient id="aig" x1="0" y1="0" x2="0" y2="1"><stop offset="0" stop-color="#4c1d95"/><stop offset=".55" stop-color="#9a2fc0"/><stop offset="1" stop-color="#dd4bdc"/></linearGradient></defs>
 <rect x="2.8" y="2.8" width="27.6" height="27.2" rx="6" fill="url(#aig)"/>
 <circle cx="24.2" cy="8.4" r="6.4" fill="#fff"/>
 <path d="M24.2 3.4 Q24.8 7.8 29.2 8.4 Q24.8 9 24.2 13.4 Q23.6 9 19.2 8.4 Q23.6 7.8 24.2 3.4 Z" fill="#6d28b0"/>
 <path d="M7.6 24.6 L12.8 10.4 H14.8 L20 24.6 M9.6 20 H18" fill="none" stroke="#fff" stroke-width="2.3" stroke-linejoin="round"/>
 <path d="M23.8 16.4 V24.6" stroke="#fff" stroke-width="2.4"/>
</svg>
<div class="abs" style="left:1740px;top:26px;width:123px;height:54px;background:#1a4b8f;border-radius:11px"></div>
<svg class="abs" style="left:1753px;top:40px" width="26" height="24" viewBox="0 0 26 24" fill="none" stroke="#fff" stroke-width="1.2" stroke-linejoin="round">
 <rect x="2.6" y="7.4" width="20.6" height="13.4" rx="1.6"/>
 <path d="M8.6 7.4 V5.2 Q8.6 4 9.8 4 H16 Q17.2 4 17.2 5.2 V7.4 M2.8 13.2 H23 M7 11.4 V15 M18.8 11.4 V15"/>
</svg>
<span class="t" style="left:1790px;top:45px;font-size:17px;letter-spacing:-.25px;color:#fff">Toolbox</span>
<div class="ctl" style="left:1871px;top:22px;width:38px;height:116px"></div>
<div class="abs" style="left:1871px;top:61px;width:38px;height:1px;background:#dcdcdc"></div>
<div class="abs" style="left:1871px;top:100px;width:38px;height:1px;background:#dcdcdc"></div>
<svg class="abs" style="left:1871px;top:22px" width="38" height="116" viewBox="0 0 38 116">
 <path d="M11.6 19.4 H26.4 M19 12 V26.8" stroke="#333" stroke-width="2" fill="none"/>
 <path d="M11.8 58.6 H26.2" stroke="#333" stroke-width="2" fill="none"/>
 <path d="M19 87.4 L23.6 97.6 H14.4 Z" fill="#3a3f4a"/>
 <path d="M19 107.6 L23.6 97.6 H14.4 Z" fill="#b0b5c4"/>
 <circle cx="19" cy="97.6" r="1.6" fill="#fff"/>
</svg>
<div class="ctl" style="left:1871px;top:150px;width:38px;height:39px"></div>
<svg class="abs" style="left:1871px;top:150px" width="38" height="39" viewBox="0 0 38 39"><path d="M27.4 11.4 L12 18 L19.6 20.4 L21.6 28.2 Z" fill="none" stroke="#333c4a" stroke-width="1.7" stroke-linejoin="round"/></svg>
<span class="t" style="left:1819px;top:822px;font-size:14px;font-weight:700;letter-spacing:-.55px;color:#1a4b8f">Attribution</span>
<svg class="abs" style="left:1891px;top:817px" width="26" height="26" viewBox="0 0 26 26"><circle cx="12.6" cy="12.6" r="11.4" fill="#000"/><circle cx="13.6" cy="6.8" r="1.7" fill="#fff"/><path d="M10 11 H14 L12.2 19 H14.6" stroke="#fff" stroke-width="2.2" fill="none" stroke-linejoin="round"/></svg>
<div class="abs" style="left:1687px;top:871px;width:233px;height:21px;background:rgba(255,255,255,.55)"></div>
<span class="t" style="left:1685.5px;top:874px;font-size:14.2px;color:#333;letter-spacing:-.08px">pTiler © OpenStreetMap contributors</span>


</body>
</html>
